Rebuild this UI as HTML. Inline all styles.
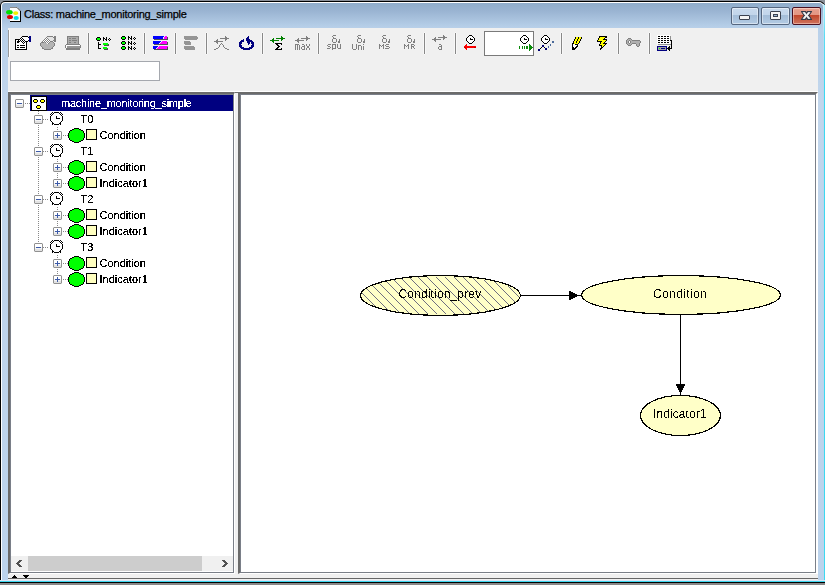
<!DOCTYPE html>
<html><head><meta charset="utf-8">
<style>
*{margin:0;padding:0;box-sizing:border-box}
html,body{width:825px;height:585px;overflow:hidden;background:#8b919a}
body{position:relative;font-family:"Liberation Sans",sans-serif}
.a{position:absolute}
.tr{position:absolute;font-size:11px;color:#000;line-height:16px;white-space:nowrap;letter-spacing:0px}
.ct{position:absolute;font-size:12px;color:#000;line-height:14px;white-space:nowrap;letter-spacing:0.3px}
</style></head>
<body>
<div class="a" style="left:0;top:1px;width:825px;height:581px;background:#000;border-radius:5px 6px 0 0"></div>
<div class="a" style="left:1px;top:2px;width:823px;height:579px;background:#fff;border-radius:4px 5px 0 0"></div>
<div class="a" style="left:2px;top:3px;width:821px;height:577px;border-radius:3px 4px 0 0;background:linear-gradient(#90adcb 0px,#9ab4d2 8px,#b3cce6 22px,#b9d1ea 26px,#c2d6ec 100px,#bcd3ec 560px)"></div>
<div class="a" style="left:824px;top:5px;width:1px;height:577px;background:linear-gradient(#a8eefc 0,#5cdcf4 30px,#3cd8f0 80px)"></div><div class="a" style="left:823px;top:4px;width:1px;height:577px;background:linear-gradient(#c8f2fc 0,#b8dcf0 30px,#bcd4ec 80px)"></div>
<div class="a" style="left:0;top:580px;width:825px;height:1px;background:#dde4f4"></div>
<div class="a" style="left:0;top:581px;width:825px;height:1px;background:#3cd8f0"></div>
<div class="a" style="left:0;top:582px;width:825px;height:1px;background:#000"></div>
<div class="a" style="left:0;top:583px;width:825px;height:2px;background:#888"></div>
<svg class="a" style="left:0;top:0" width="30" height="30">
<path d="M10 7 H17 L21 11 V22 H10 Z" fill="#fafafa"/>
<path d="M10 7.5 H17" stroke="#8a8a8a" stroke-width="1"/>
<path d="M17 7.5 L20.5 11" stroke="#404040" stroke-width="1"/>
<path d="M20.5 11 V22 M10 21.5 H21" stroke="#000" stroke-width="1" shape-rendering="crispEdges"/>
<ellipse cx="9.4" cy="12.3" rx="3.3" ry="2.2" fill="#00dd00"/>
<ellipse cx="15.7" cy="13.1" rx="2.6" ry="1.9" fill="#f0f000"/>
<ellipse cx="10" cy="17" rx="3" ry="2.1" fill="#e00000"/>
<ellipse cx="16.2" cy="18" rx="2.6" ry="2" fill="#00e0e0"/>
</svg>
<div class="a" style="left:24px;top:7px;font-size:11px;color:#000;white-space:nowrap;line-height:14px;letter-spacing:-0.25px;-webkit-text-stroke:0.25px #000">Class: machine_monitoring_simple</div>

<div class="a" style="left:731px;top:7px;width:28px;height:18px;border:1px solid #55667f;border-radius:2px;background:linear-gradient(#c9daee 0,#c2d5ea 7px,#a3bcd7 7px,#b3cbe4 16px);box-shadow:inset 0 0 0 1px rgba(255,255,255,0.45)"></div>
<div class="a" style="left:739px;top:15px;width:11px;height:5px;border:1px solid #3c4250;border-radius:1px;background:#f4f4f4"></div>
<div class="a" style="left:761px;top:7px;width:29px;height:18px;border:1px solid #55667f;border-radius:2px;background:linear-gradient(#c9daee 0,#c2d5ea 7px,#a3bcd7 7px,#b3cbe4 16px);box-shadow:inset 0 0 0 1px rgba(255,255,255,0.45)"></div>
<div class="a" style="left:770px;top:11px;width:11px;height:9px;border:1px solid #3c4250;border-radius:1px;background:#f4f4f4"></div>
<div class="a" style="left:773px;top:14px;width:5px;height:3px;border:1px solid #3c4250;background:#9ab4d2"></div>
<div class="a" style="left:792px;top:7px;width:29px;height:18px;border:1px solid #4a1020;border-radius:2px;background:linear-gradient(#f0b8a8 0,#e49c8a 2px,#e39683 7px,#c0442a 7px,#c4553a 10px,#d0735d 16px);box-shadow:inset 0 0 0 1px rgba(255,220,210,0.5)"></div>
<svg class="a" style="left:0;top:0" width="825" height="30"><polygon points="801.5,11.5 805.5,11.5 806.5,13.2 807.5,11.5 811.5,11.5 808.8,15.5 811.5,19.5 807.5,19.5 806.5,17.8 805.5,19.5 801.5,19.5 804.2,15.5" fill="#343a48" stroke="#343a48" stroke-width="1.2" stroke-linejoin="round"/><polygon points="803,12.5 805,12.5 806.5,15 808,12.5 810,12.5 807.6,15.5 810,18.5 808,18.5 806.5,16 805,18.5 803,18.5 805.4,15.5" fill="#f6f6f6" stroke="#f6f6f6" stroke-width="0.7" stroke-linejoin="round"/></svg>

<div class="a" style="left:8px;top:28px;width:810px;height:552px;background:#f0f0f0"></div>
<div class="a" style="left:8px;top:30px;width:2px;height:27px;border-left:1px solid #9a9a9a;border-right:1px solid #fff"></div>
<div class="a" style="left:10px;top:61px;width:150px;height:20px;border:1px solid #a5a8ae;background:#fff"></div>
<div class="a" style="left:484px;top:31px;width:50px;height:25px;border:1px solid #7a7a7a;background:#fff"></div>
<div class="a" style="left:8px;top:91px;width:810px;height:1px;background:#fff"></div>
<div class="a" style="left:8px;top:92px;width:227px;height:482px;background:#fff;border-top:2px solid #6b6b6b;border-left:2px solid #6b6b6b;border-bottom:1px solid #fff;border-right:1px solid #fff"></div>
<div class="a" style="left:10px;top:94px;width:224px;height:479px;border-top:1px solid #7a7f88;border-left:1px solid #7a7f88;border-bottom:1px solid #7a7f88;border-right:1px solid #7a7f88"></div>
<div class="a" style="left:238px;top:92px;width:580px;height:482px;background:#fff;border-top:2px solid #6b6b6b;border-left:2px solid #6b6b6b;border-bottom:1px solid #fff;border-right:2px solid #fff"></div>
<div class="a" style="left:240px;top:94px;width:576px;height:479px;border-top:1px solid #7a7f88;border-left:1px solid #7a7f88;border-bottom:1px solid #7a7f88;border-right:1px solid #7a7f88"></div>
<div class="a" style="left:8px;top:578px;width:810px;height:1px;background:#666"></div>
<svg class="a" style="left:0;top:0" width="825" height="585" shape-rendering="crispEdges"><rect x="22" y="36" width="6" height="1" fill="#000"/><rect x="29" y="36" width="2" height="1" fill="#000080"/><rect x="21" y="37" width="1" height="1" fill="#000"/><rect x="22" y="37" width="6" height="1" fill="#fff"/><rect x="28" y="37" width="1" height="1" fill="#000"/><rect x="29" y="37" width="2" height="1" fill="#000080"/><rect x="20" y="38" width="1" height="1" fill="#000"/><rect x="21" y="38" width="1" height="1" fill="#fff"/><rect x="22" y="38" width="1" height="1" fill="#000"/><rect x="23" y="38" width="6" height="1" fill="#fff"/><rect x="29" y="38" width="2" height="1" fill="#000080"/><rect x="15" y="39" width="5" height="1" fill="#000"/><rect x="20" y="39" width="1" height="1" fill="#fff"/><rect x="21" y="39" width="1" height="1" fill="#000"/><rect x="22" y="39" width="1" height="1" fill="#fff"/><rect x="23" y="39" width="1" height="1" fill="#000"/><rect x="24" y="39" width="5" height="1" fill="#fff"/><rect x="29" y="39" width="2" height="1" fill="#000080"/><rect x="15" y="40" width="1" height="1" fill="#000"/><rect x="16" y="40" width="2" height="1" fill="#fff"/><rect x="18" y="40" width="1" height="1" fill="#000"/><rect x="19" y="40" width="1" height="1" fill="#fff"/><rect x="20" y="40" width="1" height="1" fill="#000"/><rect x="21" y="40" width="1" height="1" fill="#fff"/><rect x="22" y="40" width="1" height="1" fill="#000"/><rect x="23" y="40" width="1" height="1" fill="#fff"/><rect x="24" y="40" width="1" height="1" fill="#000"/><rect x="25" y="40" width="3" height="1" fill="#fff"/><rect x="28" y="40" width="1" height="1" fill="#000"/><rect x="29" y="40" width="2" height="1" fill="#000080"/><rect x="15" y="41" width="1" height="1" fill="#000"/><rect x="16" y="41" width="1" height="1" fill="#fff"/><rect x="17" y="41" width="3" height="1" fill="#000"/><rect x="20" y="41" width="1" height="1" fill="#fff"/><rect x="21" y="41" width="1" height="1" fill="#000"/><rect x="22" y="41" width="1" height="1" fill="#fff"/><rect x="23" y="41" width="1" height="1" fill="#000"/><rect x="24" y="41" width="1" height="1" fill="#fff"/><rect x="25" y="41" width="3" height="1" fill="#000"/><rect x="29" y="41" width="2" height="1" fill="#000080"/><rect x="15" y="42" width="1" height="1" fill="#000"/><rect x="16" y="42" width="1" height="1" fill="#fff"/><rect x="17" y="42" width="2" height="1" fill="#000"/><rect x="19" y="42" width="3" height="1" fill="#fff"/><rect x="22" y="42" width="1" height="1" fill="#000"/><rect x="23" y="42" width="1" height="1" fill="#fff"/><rect x="24" y="42" width="1" height="1" fill="#000"/><rect x="25" y="42" width="1" height="1" fill="#fff"/><rect x="26" y="42" width="1" height="1" fill="#000"/><rect x="15" y="43" width="1" height="1" fill="#000"/><rect x="16" y="43" width="7" height="1" fill="#fff"/><rect x="23" y="43" width="1" height="1" fill="#000"/><rect x="24" y="43" width="2" height="1" fill="#fff"/><rect x="26" y="43" width="1" height="1" fill="#000"/><rect x="15" y="44" width="1" height="1" fill="#000"/><rect x="16" y="44" width="10" height="1" fill="#fff"/><rect x="26" y="44" width="1" height="1" fill="#000"/><rect x="15" y="45" width="1" height="1" fill="#000"/><rect x="16" y="45" width="1" height="1" fill="#fff"/><rect x="17" y="45" width="2" height="1" fill="#000"/><rect x="19" y="45" width="1" height="1" fill="#fff"/><rect x="20" y="45" width="5" height="1" fill="#000"/><rect x="25" y="45" width="1" height="1" fill="#fff"/><rect x="26" y="45" width="1" height="1" fill="#000"/><rect x="15" y="46" width="1" height="1" fill="#000"/><rect x="16" y="46" width="10" height="1" fill="#fff"/><rect x="26" y="46" width="1" height="1" fill="#000"/><rect x="15" y="47" width="1" height="1" fill="#000"/><rect x="16" y="47" width="1" height="1" fill="#fff"/><rect x="17" y="47" width="2" height="1" fill="#000"/><rect x="19" y="47" width="1" height="1" fill="#fff"/><rect x="20" y="47" width="5" height="1" fill="#000"/><rect x="25" y="47" width="1" height="1" fill="#fff"/><rect x="26" y="47" width="1" height="1" fill="#000"/><rect x="15" y="48" width="1" height="1" fill="#000"/><rect x="16" y="48" width="10" height="1" fill="#fff"/><rect x="26" y="48" width="1" height="1" fill="#000"/><rect x="15" y="49" width="12" height="1" fill="#000"/><rect x="47" y="36" width="6" height="1" fill="#808080"/><rect x="54" y="36" width="2" height="1" fill="#808080"/><rect x="46" y="37" width="1" height="1" fill="#808080"/><rect x="47" y="37" width="6" height="1" fill="#e4e4e4"/><rect x="53" y="37" width="3" height="1" fill="#808080"/><rect x="45" y="38" width="1" height="1" fill="#808080"/><rect x="46" y="38" width="1" height="1" fill="#fff"/><rect x="47" y="38" width="1" height="1" fill="#808080"/><rect x="48" y="38" width="6" height="1" fill="#e4e4e4"/><rect x="54" y="38" width="2" height="1" fill="#808080"/><rect x="44" y="39" width="1" height="1" fill="#808080"/><rect x="45" y="39" width="1" height="1" fill="#fff"/><rect x="46" y="39" width="1" height="1" fill="#808080"/><rect x="47" y="39" width="1" height="1" fill="#fff"/><rect x="48" y="39" width="1" height="1" fill="#808080"/><rect x="49" y="39" width="5" height="1" fill="#e4e4e4"/><rect x="54" y="39" width="2" height="1" fill="#808080"/><rect x="43" y="40" width="1" height="1" fill="#808080"/><rect x="44" y="40" width="1" height="1" fill="#fff"/><rect x="45" y="40" width="1" height="1" fill="#808080"/><rect x="46" y="40" width="1" height="1" fill="#fff"/><rect x="47" y="40" width="1" height="1" fill="#808080"/><rect x="48" y="40" width="1" height="1" fill="#fff"/><rect x="49" y="40" width="1" height="1" fill="#808080"/><rect x="50" y="40" width="3" height="1" fill="#e4e4e4"/><rect x="53" y="40" width="3" height="1" fill="#808080"/><rect x="42" y="41" width="1" height="1" fill="#808080"/><rect x="43" y="41" width="1" height="1" fill="#fff"/><rect x="44" y="41" width="1" height="1" fill="#808080"/><rect x="45" y="41" width="1" height="1" fill="#fff"/><rect x="46" y="41" width="1" height="1" fill="#808080"/><rect x="47" y="41" width="1" height="1" fill="#fff"/><rect x="48" y="41" width="1" height="1" fill="#808080"/><rect x="49" y="41" width="1" height="1" fill="#fff"/><rect x="50" y="41" width="3" height="1" fill="#808080"/><rect x="54" y="41" width="2" height="1" fill="#808080"/><rect x="41" y="42" width="3" height="1" fill="#808080"/><rect x="44" y="42" width="1" height="1" fill="#b4b4b4"/><rect x="45" y="42" width="1" height="1" fill="#808080"/><rect x="46" y="42" width="1" height="1" fill="#fff"/><rect x="47" y="42" width="1" height="1" fill="#808080"/><rect x="48" y="42" width="1" height="1" fill="#fff"/><rect x="49" y="42" width="1" height="1" fill="#808080"/><rect x="50" y="42" width="3" height="1" fill="#b4b4b4"/><rect x="53" y="42" width="1" height="1" fill="#808080"/><rect x="40" y="43" width="1" height="1" fill="#808080"/><rect x="41" y="43" width="6" height="1" fill="#b4b4b4"/><rect x="47" y="43" width="1" height="1" fill="#fff"/><rect x="48" y="43" width="1" height="1" fill="#808080"/><rect x="49" y="43" width="5" height="1" fill="#b4b4b4"/><rect x="54" y="43" width="1" height="1" fill="#808080"/><rect x="40" y="44" width="1" height="1" fill="#808080"/><rect x="41" y="44" width="13" height="1" fill="#b4b4b4"/><rect x="54" y="44" width="1" height="1" fill="#808080"/><rect x="40" y="45" width="1" height="1" fill="#808080"/><rect x="41" y="45" width="13" height="1" fill="#b4b4b4"/><rect x="54" y="45" width="1" height="1" fill="#808080"/><rect x="41" y="46" width="1" height="1" fill="#808080"/><rect x="42" y="46" width="11" height="1" fill="#b4b4b4"/><rect x="53" y="46" width="1" height="1" fill="#808080"/><rect x="42" y="47" width="1" height="1" fill="#808080"/><rect x="43" y="47" width="9" height="1" fill="#b4b4b4"/><rect x="52" y="47" width="1" height="1" fill="#808080"/><rect x="42" y="48" width="2" height="1" fill="#808080"/><rect x="44" y="48" width="7" height="1" fill="#b4b4b4"/><rect x="51" y="48" width="2" height="1" fill="#808080"/><rect x="44" y="49" width="7" height="1" fill="#808080"/><rect x="67" y="36" width="12" height="1" fill="#808080"/><rect x="67" y="37" width="1" height="1" fill="#808080"/><rect x="68" y="37" width="10" height="1" fill="#ababab"/><rect x="78" y="37" width="1" height="1" fill="#808080"/><rect x="67" y="38" width="1" height="1" fill="#808080"/><rect x="68" y="38" width="1" height="1" fill="#ababab"/><rect x="69" y="38" width="2" height="1" fill="#808080"/><rect x="71" y="38" width="1" height="1" fill="#ababab"/><rect x="72" y="38" width="4" height="1" fill="#808080"/><rect x="76" y="38" width="2" height="1" fill="#ababab"/><rect x="78" y="38" width="1" height="1" fill="#808080"/><rect x="67" y="39" width="1" height="1" fill="#808080"/><rect x="68" y="39" width="10" height="1" fill="#ababab"/><rect x="78" y="39" width="1" height="1" fill="#808080"/><rect x="67" y="40" width="1" height="1" fill="#808080"/><rect x="68" y="40" width="1" height="1" fill="#ababab"/><rect x="69" y="40" width="2" height="1" fill="#808080"/><rect x="71" y="40" width="1" height="1" fill="#ababab"/><rect x="72" y="40" width="5" height="1" fill="#808080"/><rect x="77" y="40" width="1" height="1" fill="#ababab"/><rect x="78" y="40" width="1" height="1" fill="#808080"/><rect x="67" y="41" width="1" height="1" fill="#808080"/><rect x="68" y="41" width="10" height="1" fill="#ababab"/><rect x="78" y="41" width="1" height="1" fill="#808080"/><rect x="67" y="42" width="1" height="1" fill="#808080"/><rect x="68" y="42" width="1" height="1" fill="#ababab"/><rect x="69" y="42" width="2" height="1" fill="#808080"/><rect x="71" y="42" width="3" height="1" fill="#ababab"/><rect x="74" y="42" width="2" height="1" fill="#808080"/><rect x="76" y="42" width="2" height="1" fill="#ababab"/><rect x="78" y="42" width="1" height="1" fill="#808080"/><rect x="67" y="43" width="1" height="1" fill="#808080"/><rect x="68" y="43" width="10" height="1" fill="#ababab"/><rect x="78" y="43" width="1" height="1" fill="#808080"/><rect x="66" y="44" width="14" height="1" fill="#808080"/><rect x="65" y="45" width="1" height="1" fill="#808080"/><rect x="66" y="45" width="14" height="1" fill="#fff"/><rect x="80" y="45" width="1" height="1" fill="#808080"/><rect x="65" y="46" width="1" height="1" fill="#808080"/><rect x="66" y="46" width="1" height="1" fill="#fff"/><rect x="67" y="46" width="13" height="1" fill="#959595"/><rect x="80" y="46" width="1" height="1" fill="#808080"/><rect x="65" y="47" width="1" height="1" fill="#808080"/><rect x="66" y="47" width="1" height="1" fill="#fff"/><rect x="67" y="47" width="13" height="1" fill="#959595"/><rect x="80" y="47" width="1" height="1" fill="#808080"/><rect x="66" y="48" width="14" height="1" fill="#808080"/><rect x="66" y="49" width="14" height="1" fill="#808080"/><rect x="97" y="37" width="3" height="1" fill="#000"/><rect x="103" y="37" width="1" height="1" fill="#000"/><rect x="106" y="37" width="1" height="1" fill="#000"/><rect x="96" y="38" width="1" height="1" fill="#000"/><rect x="97" y="38" width="3" height="1" fill="#00ff00"/><rect x="100" y="38" width="1" height="1" fill="#000"/><rect x="103" y="38" width="2" height="1" fill="#000"/><rect x="106" y="38" width="1" height="1" fill="#000"/><rect x="109" y="38" width="1" height="1" fill="#000"/><rect x="96" y="39" width="1" height="1" fill="#000"/><rect x="97" y="39" width="3" height="1" fill="#00ff00"/><rect x="100" y="39" width="1" height="1" fill="#000"/><rect x="103" y="39" width="1" height="1" fill="#000"/><rect x="105" y="39" width="2" height="1" fill="#000"/><rect x="108" y="39" width="1" height="1" fill="#000"/><rect x="110" y="39" width="1" height="1" fill="#000"/><rect x="97" y="40" width="3" height="1" fill="#000"/><rect x="103" y="40" width="1" height="1" fill="#000"/><rect x="106" y="40" width="1" height="1" fill="#000"/><rect x="109" y="40" width="1" height="1" fill="#000"/><rect x="98" y="42" width="1" height="1" fill="#000"/><rect x="98" y="43" width="1" height="1" fill="#000"/><rect x="103" y="43" width="5" height="1" fill="#00ff00"/><rect x="98" y="44" width="3" height="1" fill="#000"/><rect x="103" y="44" width="5" height="1" fill="#00ff00"/><rect x="108" y="44" width="1" height="1" fill="#505050"/><rect x="98" y="45" width="1" height="1" fill="#000"/><rect x="104" y="45" width="5" height="1" fill="#505050"/><rect x="98" y="46" width="1" height="1" fill="#000"/><rect x="98" y="47" width="1" height="1" fill="#000"/><rect x="103" y="47" width="4" height="1" fill="#00ff00"/><rect x="98" y="48" width="3" height="1" fill="#000"/><rect x="103" y="48" width="4" height="1" fill="#00ff00"/><rect x="107" y="48" width="1" height="1" fill="#505050"/><rect x="104" y="49" width="4" height="1" fill="#505050"/><rect x="122" y="36" width="3" height="1" fill="#000"/><rect x="128" y="36" width="1" height="1" fill="#000"/><rect x="131" y="36" width="1" height="1" fill="#000"/><rect x="121" y="37" width="1" height="1" fill="#000"/><rect x="122" y="37" width="3" height="1" fill="#00ff00"/><rect x="125" y="37" width="1" height="1" fill="#000"/><rect x="128" y="37" width="2" height="1" fill="#000"/><rect x="131" y="37" width="1" height="1" fill="#000"/><rect x="134" y="37" width="1" height="1" fill="#000"/><rect x="121" y="38" width="1" height="1" fill="#000"/><rect x="122" y="38" width="3" height="1" fill="#00ff00"/><rect x="125" y="38" width="1" height="1" fill="#000"/><rect x="128" y="38" width="1" height="1" fill="#000"/><rect x="130" y="38" width="2" height="1" fill="#000"/><rect x="133" y="38" width="1" height="1" fill="#000"/><rect x="135" y="38" width="1" height="1" fill="#000"/><rect x="122" y="39" width="3" height="1" fill="#000"/><rect x="128" y="39" width="1" height="1" fill="#000"/><rect x="131" y="39" width="1" height="1" fill="#000"/><rect x="134" y="39" width="1" height="1" fill="#000"/><rect x="122" y="41" width="3" height="1" fill="#000"/><rect x="128" y="41" width="1" height="1" fill="#000"/><rect x="131" y="41" width="1" height="1" fill="#000"/><rect x="121" y="42" width="1" height="1" fill="#000"/><rect x="122" y="42" width="3" height="1" fill="#00ff00"/><rect x="125" y="42" width="1" height="1" fill="#000"/><rect x="128" y="42" width="2" height="1" fill="#000"/><rect x="131" y="42" width="1" height="1" fill="#000"/><rect x="134" y="42" width="1" height="1" fill="#000"/><rect x="121" y="43" width="1" height="1" fill="#000"/><rect x="122" y="43" width="3" height="1" fill="#00ff00"/><rect x="125" y="43" width="1" height="1" fill="#000"/><rect x="128" y="43" width="1" height="1" fill="#000"/><rect x="130" y="43" width="2" height="1" fill="#000"/><rect x="133" y="43" width="1" height="1" fill="#000"/><rect x="135" y="43" width="1" height="1" fill="#000"/><rect x="122" y="44" width="3" height="1" fill="#000"/><rect x="128" y="44" width="1" height="1" fill="#000"/><rect x="131" y="44" width="1" height="1" fill="#000"/><rect x="134" y="44" width="1" height="1" fill="#000"/><rect x="122" y="46" width="3" height="1" fill="#000"/><rect x="128" y="46" width="1" height="1" fill="#000"/><rect x="131" y="46" width="1" height="1" fill="#000"/><rect x="121" y="47" width="1" height="1" fill="#000"/><rect x="122" y="47" width="3" height="1" fill="#00ff00"/><rect x="125" y="47" width="1" height="1" fill="#000"/><rect x="128" y="47" width="2" height="1" fill="#000"/><rect x="131" y="47" width="1" height="1" fill="#000"/><rect x="134" y="47" width="1" height="1" fill="#000"/><rect x="121" y="48" width="1" height="1" fill="#000"/><rect x="122" y="48" width="3" height="1" fill="#00ff00"/><rect x="125" y="48" width="1" height="1" fill="#000"/><rect x="128" y="48" width="1" height="1" fill="#000"/><rect x="130" y="48" width="2" height="1" fill="#000"/><rect x="133" y="48" width="1" height="1" fill="#000"/><rect x="135" y="48" width="1" height="1" fill="#000"/><rect x="122" y="49" width="3" height="1" fill="#000"/><rect x="128" y="49" width="1" height="1" fill="#000"/><rect x="131" y="49" width="1" height="1" fill="#000"/><rect x="134" y="49" width="1" height="1" fill="#000"/><rect x="153" y="36" width="11" height="1" fill="#0000ff"/><rect x="165" y="36" width="2" height="1" fill="#ff00ff"/><rect x="153" y="37" width="10" height="1" fill="#0000ff"/><rect x="164" y="37" width="3" height="1" fill="#ff00ff"/><rect x="167" y="37" width="1" height="1" fill="#505050"/><rect x="153" y="38" width="10" height="1" fill="#0000ff"/><rect x="164" y="38" width="3" height="1" fill="#ff00ff"/><rect x="167" y="38" width="1" height="1" fill="#505050"/><rect x="154" y="39" width="14" height="1" fill="#505050"/><rect x="153" y="41" width="8" height="1" fill="#0000ff"/><rect x="162" y="41" width="5" height="1" fill="#ff00ff"/><rect x="153" y="42" width="7" height="1" fill="#0000ff"/><rect x="161" y="42" width="6" height="1" fill="#ff00ff"/><rect x="167" y="42" width="1" height="1" fill="#505050"/><rect x="153" y="43" width="6" height="1" fill="#0000ff"/><rect x="160" y="43" width="7" height="1" fill="#ff00ff"/><rect x="167" y="43" width="1" height="1" fill="#505050"/><rect x="154" y="44" width="14" height="1" fill="#505050"/><rect x="153" y="46" width="5" height="1" fill="#0000ff"/><rect x="159" y="46" width="9" height="1" fill="#ff00ff"/><rect x="153" y="47" width="4" height="1" fill="#0000ff"/><rect x="158" y="47" width="9" height="1" fill="#ff00ff"/><rect x="167" y="47" width="1" height="1" fill="#505050"/><rect x="153" y="48" width="3" height="1" fill="#0000ff"/><rect x="157" y="48" width="10" height="1" fill="#ff00ff"/><rect x="167" y="48" width="1" height="1" fill="#505050"/><rect x="154" y="49" width="14" height="1" fill="#505050"/><rect x="184" y="36" width="13" height="1" fill="#959595"/><rect x="184" y="37" width="14" height="1" fill="#959595"/><rect x="184" y="38" width="14" height="1" fill="#959595"/><rect x="185" y="39" width="12" height="1" fill="#959595"/><rect x="184" y="41" width="6" height="1" fill="#959595"/><rect x="184" y="42" width="7" height="1" fill="#959595"/><rect x="184" y="43" width="7" height="1" fill="#959595"/><rect x="185" y="44" width="6" height="1" fill="#959595"/><rect x="184" y="46" width="10" height="1" fill="#959595"/><rect x="184" y="47" width="11" height="1" fill="#959595"/><rect x="184" y="48" width="11" height="1" fill="#959595"/><rect x="185" y="49" width="10" height="1" fill="#959595"/><rect x="225" y="36" width="1" height="1" fill="#808080"/><rect x="225" y="37" width="2" height="1" fill="#808080"/><rect x="220" y="38" width="9" height="1" fill="#808080"/><rect x="217" y="39" width="1" height="1" fill="#808080"/><rect x="225" y="39" width="2" height="1" fill="#808080"/><rect x="216" y="40" width="2" height="1" fill="#808080"/><rect x="225" y="40" width="1" height="1" fill="#808080"/><rect x="214" y="41" width="9" height="1" fill="#808080"/><rect x="216" y="42" width="2" height="1" fill="#808080"/><rect x="217" y="43" width="1" height="1" fill="#808080"/><rect x="221" y="43" width="1" height="1" fill="#808080"/><rect x="220" y="44" width="1" height="1" fill="#808080"/><rect x="222" y="44" width="1" height="1" fill="#808080"/><rect x="219" y="45" width="1" height="1" fill="#808080"/><rect x="223" y="45" width="1" height="1" fill="#808080"/><rect x="219" y="46" width="1" height="1" fill="#808080"/><rect x="223" y="46" width="1" height="1" fill="#808080"/><rect x="218" y="47" width="1" height="1" fill="#808080"/><rect x="224" y="47" width="1" height="1" fill="#808080"/><rect x="216" y="48" width="2" height="1" fill="#808080"/><rect x="225" y="48" width="2" height="1" fill="#808080"/><rect x="214" y="49" width="2" height="1" fill="#808080"/><rect x="227" y="49" width="2" height="1" fill="#808080"/><rect x="248" y="36" width="1" height="1" fill="#000080"/><rect x="247" y="37" width="2" height="1" fill="#000080"/><rect x="246" y="38" width="3" height="1" fill="#000080"/><rect x="243" y="39" width="1" height="1" fill="#000080"/><rect x="246" y="39" width="4" height="1" fill="#000080"/><rect x="241" y="40" width="3" height="1" fill="#000080"/><rect x="246" y="40" width="6" height="1" fill="#000080"/><rect x="240" y="41" width="4" height="1" fill="#000080"/><rect x="247" y="41" width="6" height="1" fill="#000080"/><rect x="239" y="42" width="3" height="1" fill="#000080"/><rect x="247" y="42" width="3" height="1" fill="#000080"/><rect x="251" y="42" width="3" height="1" fill="#000080"/><rect x="239" y="43" width="3" height="1" fill="#000080"/><rect x="248" y="43" width="2" height="1" fill="#000080"/><rect x="251" y="43" width="3" height="1" fill="#000080"/><rect x="239" y="44" width="2" height="1" fill="#000080"/><rect x="248" y="44" width="1" height="1" fill="#000080"/><rect x="252" y="44" width="2" height="1" fill="#000080"/><rect x="239" y="45" width="3" height="1" fill="#000080"/><rect x="251" y="45" width="3" height="1" fill="#000080"/><rect x="239" y="46" width="3" height="1" fill="#000080"/><rect x="251" y="46" width="3" height="1" fill="#000080"/><rect x="240" y="47" width="4" height="1" fill="#000080"/><rect x="249" y="47" width="4" height="1" fill="#000080"/><rect x="241" y="48" width="11" height="1" fill="#000080"/><rect x="243" y="49" width="7" height="1" fill="#000080"/><rect x="281" y="36" width="1" height="1" fill="#008000"/><rect x="281" y="37" width="2" height="1" fill="#008000"/><rect x="273" y="38" width="1" height="1" fill="#008000"/><rect x="276" y="38" width="9" height="1" fill="#008000"/><rect x="272" y="39" width="2" height="1" fill="#008000"/><rect x="281" y="39" width="2" height="1" fill="#008000"/><rect x="270" y="40" width="9" height="1" fill="#008000"/><rect x="281" y="40" width="1" height="1" fill="#008000"/><rect x="272" y="41" width="2" height="1" fill="#008000"/><rect x="273" y="42" width="1" height="1" fill="#008000"/><rect x="275" y="43" width="7" height="1" fill="#000"/><rect x="276" y="44" width="2" height="1" fill="#000"/><rect x="281" y="44" width="1" height="1" fill="#000"/><rect x="277" y="45" width="2" height="1" fill="#000"/><rect x="278" y="46" width="2" height="1" fill="#000"/><rect x="277" y="47" width="2" height="1" fill="#000"/><rect x="276" y="48" width="2" height="1" fill="#000"/><rect x="281" y="48" width="1" height="1" fill="#000"/><rect x="275" y="49" width="7" height="1" fill="#000"/><rect x="306" y="36" width="1" height="1" fill="#808080"/><rect x="306" y="37" width="2" height="1" fill="#808080"/><rect x="298" y="38" width="1" height="1" fill="#808080"/><rect x="301" y="38" width="9" height="1" fill="#808080"/><rect x="297" y="39" width="2" height="1" fill="#808080"/><rect x="306" y="39" width="2" height="1" fill="#808080"/><rect x="295" y="40" width="9" height="1" fill="#808080"/><rect x="306" y="40" width="1" height="1" fill="#808080"/><rect x="297" y="41" width="2" height="1" fill="#808080"/><rect x="298" y="42" width="1" height="1" fill="#808080"/><rect x="295" y="44" width="4" height="1" fill="#808080"/><rect x="302" y="44" width="2" height="1" fill="#808080"/><rect x="306" y="44" width="1" height="1" fill="#808080"/><rect x="309" y="44" width="1" height="1" fill="#808080"/><rect x="295" y="45" width="1" height="1" fill="#808080"/><rect x="297" y="45" width="1" height="1" fill="#808080"/><rect x="299" y="45" width="1" height="1" fill="#808080"/><rect x="304" y="45" width="1" height="1" fill="#808080"/><rect x="306" y="45" width="1" height="1" fill="#808080"/><rect x="309" y="45" width="1" height="1" fill="#808080"/><rect x="295" y="46" width="1" height="1" fill="#808080"/><rect x="297" y="46" width="1" height="1" fill="#808080"/><rect x="299" y="46" width="1" height="1" fill="#808080"/><rect x="302" y="46" width="3" height="1" fill="#808080"/><rect x="307" y="46" width="2" height="1" fill="#808080"/><rect x="295" y="47" width="1" height="1" fill="#808080"/><rect x="297" y="47" width="1" height="1" fill="#808080"/><rect x="299" y="47" width="1" height="1" fill="#808080"/><rect x="301" y="47" width="1" height="1" fill="#808080"/><rect x="304" y="47" width="1" height="1" fill="#808080"/><rect x="307" y="47" width="2" height="1" fill="#808080"/><rect x="295" y="48" width="1" height="1" fill="#808080"/><rect x="297" y="48" width="1" height="1" fill="#808080"/><rect x="299" y="48" width="1" height="1" fill="#808080"/><rect x="301" y="48" width="1" height="1" fill="#808080"/><rect x="304" y="48" width="1" height="1" fill="#808080"/><rect x="306" y="48" width="1" height="1" fill="#808080"/><rect x="309" y="48" width="1" height="1" fill="#808080"/><rect x="295" y="49" width="1" height="1" fill="#808080"/><rect x="297" y="49" width="1" height="1" fill="#808080"/><rect x="299" y="49" width="1" height="1" fill="#808080"/><rect x="302" y="49" width="3" height="1" fill="#808080"/><rect x="306" y="49" width="1" height="1" fill="#808080"/><rect x="309" y="49" width="1" height="1" fill="#808080"/><rect x="333" y="35" width="3" height="1" fill="#808080"/><rect x="332" y="36" width="1" height="1" fill="#808080"/><rect x="333" y="37" width="1" height="1" fill="#808080"/><rect x="333" y="38" width="3" height="1" fill="#808080"/><rect x="332" y="39" width="1" height="1" fill="#808080"/><rect x="336" y="39" width="1" height="1" fill="#808080"/><rect x="339" y="39" width="1" height="1" fill="#808080"/><rect x="332" y="40" width="1" height="1" fill="#808080"/><rect x="336" y="40" width="1" height="1" fill="#808080"/><rect x="339" y="40" width="1" height="1" fill="#808080"/><rect x="332" y="41" width="1" height="1" fill="#808080"/><rect x="336" y="41" width="1" height="1" fill="#808080"/><rect x="338" y="41" width="2" height="1" fill="#808080"/><rect x="333" y="42" width="3" height="1" fill="#808080"/><rect x="338" y="42" width="2" height="1" fill="#808080"/><rect x="328" y="44" width="3" height="1" fill="#808080"/><rect x="332" y="44" width="4" height="1" fill="#808080"/><rect x="337" y="44" width="1" height="1" fill="#808080"/><rect x="340" y="44" width="1" height="1" fill="#808080"/><rect x="327" y="45" width="1" height="1" fill="#808080"/><rect x="332" y="45" width="1" height="1" fill="#808080"/><rect x="335" y="45" width="1" height="1" fill="#808080"/><rect x="337" y="45" width="1" height="1" fill="#808080"/><rect x="340" y="45" width="1" height="1" fill="#808080"/><rect x="328" y="46" width="2" height="1" fill="#808080"/><rect x="332" y="46" width="1" height="1" fill="#808080"/><rect x="335" y="46" width="1" height="1" fill="#808080"/><rect x="337" y="46" width="1" height="1" fill="#808080"/><rect x="340" y="46" width="1" height="1" fill="#808080"/><rect x="330" y="47" width="1" height="1" fill="#808080"/><rect x="332" y="47" width="1" height="1" fill="#808080"/><rect x="335" y="47" width="1" height="1" fill="#808080"/><rect x="337" y="47" width="1" height="1" fill="#808080"/><rect x="340" y="47" width="1" height="1" fill="#808080"/><rect x="327" y="48" width="3" height="1" fill="#808080"/><rect x="332" y="48" width="4" height="1" fill="#808080"/><rect x="338" y="48" width="3" height="1" fill="#808080"/><rect x="332" y="49" width="1" height="1" fill="#808080"/><rect x="358" y="35" width="3" height="1" fill="#808080"/><rect x="357" y="36" width="1" height="1" fill="#808080"/><rect x="358" y="37" width="1" height="1" fill="#808080"/><rect x="358" y="38" width="3" height="1" fill="#808080"/><rect x="357" y="39" width="1" height="1" fill="#808080"/><rect x="361" y="39" width="1" height="1" fill="#808080"/><rect x="364" y="39" width="1" height="1" fill="#808080"/><rect x="357" y="40" width="1" height="1" fill="#808080"/><rect x="361" y="40" width="1" height="1" fill="#808080"/><rect x="364" y="40" width="1" height="1" fill="#808080"/><rect x="357" y="41" width="1" height="1" fill="#808080"/><rect x="361" y="41" width="1" height="1" fill="#808080"/><rect x="363" y="41" width="2" height="1" fill="#808080"/><rect x="358" y="42" width="3" height="1" fill="#808080"/><rect x="363" y="42" width="2" height="1" fill="#808080"/><rect x="352" y="44" width="1" height="1" fill="#808080"/><rect x="356" y="44" width="1" height="1" fill="#808080"/><rect x="363" y="44" width="1" height="1" fill="#808080"/><rect x="352" y="45" width="1" height="1" fill="#808080"/><rect x="356" y="45" width="1" height="1" fill="#808080"/><rect x="358" y="45" width="3" height="1" fill="#808080"/><rect x="352" y="46" width="1" height="1" fill="#808080"/><rect x="356" y="46" width="1" height="1" fill="#808080"/><rect x="358" y="46" width="1" height="1" fill="#808080"/><rect x="361" y="46" width="1" height="1" fill="#808080"/><rect x="363" y="46" width="1" height="1" fill="#808080"/><rect x="352" y="47" width="1" height="1" fill="#808080"/><rect x="356" y="47" width="1" height="1" fill="#808080"/><rect x="358" y="47" width="1" height="1" fill="#808080"/><rect x="361" y="47" width="1" height="1" fill="#808080"/><rect x="363" y="47" width="1" height="1" fill="#808080"/><rect x="352" y="48" width="1" height="1" fill="#808080"/><rect x="356" y="48" width="1" height="1" fill="#808080"/><rect x="358" y="48" width="1" height="1" fill="#808080"/><rect x="361" y="48" width="1" height="1" fill="#808080"/><rect x="363" y="48" width="1" height="1" fill="#808080"/><rect x="353" y="49" width="3" height="1" fill="#808080"/><rect x="358" y="49" width="1" height="1" fill="#808080"/><rect x="361" y="49" width="1" height="1" fill="#808080"/><rect x="363" y="49" width="1" height="1" fill="#808080"/><rect x="383" y="35" width="3" height="1" fill="#808080"/><rect x="382" y="36" width="1" height="1" fill="#808080"/><rect x="383" y="37" width="1" height="1" fill="#808080"/><rect x="383" y="38" width="3" height="1" fill="#808080"/><rect x="382" y="39" width="1" height="1" fill="#808080"/><rect x="386" y="39" width="1" height="1" fill="#808080"/><rect x="389" y="39" width="1" height="1" fill="#808080"/><rect x="382" y="40" width="1" height="1" fill="#808080"/><rect x="386" y="40" width="1" height="1" fill="#808080"/><rect x="389" y="40" width="1" height="1" fill="#808080"/><rect x="382" y="41" width="1" height="1" fill="#808080"/><rect x="386" y="41" width="1" height="1" fill="#808080"/><rect x="388" y="41" width="2" height="1" fill="#808080"/><rect x="383" y="42" width="3" height="1" fill="#808080"/><rect x="388" y="42" width="2" height="1" fill="#808080"/><rect x="379" y="44" width="1" height="1" fill="#808080"/><rect x="383" y="44" width="1" height="1" fill="#808080"/><rect x="386" y="44" width="3" height="1" fill="#808080"/><rect x="379" y="45" width="2" height="1" fill="#808080"/><rect x="382" y="45" width="2" height="1" fill="#808080"/><rect x="385" y="45" width="1" height="1" fill="#808080"/><rect x="379" y="46" width="1" height="1" fill="#808080"/><rect x="381" y="46" width="1" height="1" fill="#808080"/><rect x="383" y="46" width="1" height="1" fill="#808080"/><rect x="386" y="46" width="3" height="1" fill="#808080"/><rect x="379" y="47" width="1" height="1" fill="#808080"/><rect x="383" y="47" width="1" height="1" fill="#808080"/><rect x="389" y="47" width="1" height="1" fill="#808080"/><rect x="379" y="48" width="1" height="1" fill="#808080"/><rect x="383" y="48" width="1" height="1" fill="#808080"/><rect x="385" y="48" width="4" height="1" fill="#808080"/><rect x="408" y="35" width="3" height="1" fill="#808080"/><rect x="407" y="36" width="1" height="1" fill="#808080"/><rect x="408" y="37" width="1" height="1" fill="#808080"/><rect x="408" y="38" width="3" height="1" fill="#808080"/><rect x="407" y="39" width="1" height="1" fill="#808080"/><rect x="411" y="39" width="1" height="1" fill="#808080"/><rect x="414" y="39" width="1" height="1" fill="#808080"/><rect x="407" y="40" width="1" height="1" fill="#808080"/><rect x="411" y="40" width="1" height="1" fill="#808080"/><rect x="414" y="40" width="1" height="1" fill="#808080"/><rect x="407" y="41" width="1" height="1" fill="#808080"/><rect x="411" y="41" width="1" height="1" fill="#808080"/><rect x="413" y="41" width="2" height="1" fill="#808080"/><rect x="408" y="42" width="3" height="1" fill="#808080"/><rect x="413" y="42" width="2" height="1" fill="#808080"/><rect x="404" y="44" width="1" height="1" fill="#808080"/><rect x="408" y="44" width="1" height="1" fill="#808080"/><rect x="411" y="44" width="3" height="1" fill="#808080"/><rect x="404" y="45" width="2" height="1" fill="#808080"/><rect x="407" y="45" width="2" height="1" fill="#808080"/><rect x="411" y="45" width="1" height="1" fill="#808080"/><rect x="414" y="45" width="1" height="1" fill="#808080"/><rect x="404" y="46" width="1" height="1" fill="#808080"/><rect x="406" y="46" width="1" height="1" fill="#808080"/><rect x="408" y="46" width="1" height="1" fill="#808080"/><rect x="411" y="46" width="3" height="1" fill="#808080"/><rect x="404" y="47" width="1" height="1" fill="#808080"/><rect x="408" y="47" width="1" height="1" fill="#808080"/><rect x="411" y="47" width="1" height="1" fill="#808080"/><rect x="413" y="47" width="1" height="1" fill="#808080"/><rect x="404" y="48" width="1" height="1" fill="#808080"/><rect x="408" y="48" width="1" height="1" fill="#808080"/><rect x="411" y="48" width="1" height="1" fill="#808080"/><rect x="414" y="48" width="1" height="1" fill="#808080"/><rect x="443" y="35" width="1" height="1" fill="#808080"/><rect x="443" y="36" width="2" height="1" fill="#808080"/><rect x="435" y="37" width="1" height="1" fill="#808080"/><rect x="438" y="37" width="9" height="1" fill="#808080"/><rect x="434" y="38" width="2" height="1" fill="#808080"/><rect x="443" y="38" width="2" height="1" fill="#808080"/><rect x="432" y="39" width="9" height="1" fill="#808080"/><rect x="443" y="39" width="1" height="1" fill="#808080"/><rect x="434" y="40" width="2" height="1" fill="#808080"/><rect x="435" y="41" width="1" height="1" fill="#808080"/><rect x="439" y="44" width="2" height="1" fill="#808080"/><rect x="441" y="45" width="1" height="1" fill="#808080"/><rect x="439" y="46" width="3" height="1" fill="#808080"/><rect x="438" y="47" width="1" height="1" fill="#808080"/><rect x="441" y="47" width="1" height="1" fill="#808080"/><rect x="438" y="48" width="1" height="1" fill="#808080"/><rect x="441" y="48" width="1" height="1" fill="#808080"/><rect x="439" y="49" width="3" height="1" fill="#808080"/><rect x="469" y="35" width="3" height="1" fill="#000"/><rect x="468" y="36" width="1" height="1" fill="#000"/><rect x="469" y="36" width="3" height="1" fill="#fff"/><rect x="472" y="36" width="1" height="1" fill="#000"/><rect x="467" y="37" width="1" height="1" fill="#000"/><rect x="468" y="37" width="5" height="1" fill="#fff"/><rect x="473" y="37" width="1" height="1" fill="#000"/><rect x="466" y="38" width="1" height="1" fill="#000"/><rect x="467" y="38" width="3" height="1" fill="#fff"/><rect x="470" y="38" width="1" height="1" fill="#000"/><rect x="471" y="38" width="3" height="1" fill="#fff"/><rect x="474" y="38" width="1" height="1" fill="#000"/><rect x="466" y="39" width="1" height="1" fill="#000"/><rect x="467" y="39" width="3" height="1" fill="#fff"/><rect x="470" y="39" width="3" height="1" fill="#000"/><rect x="473" y="39" width="1" height="1" fill="#fff"/><rect x="474" y="39" width="1" height="1" fill="#000"/><rect x="466" y="40" width="1" height="1" fill="#000"/><rect x="467" y="40" width="7" height="1" fill="#fff"/><rect x="474" y="40" width="1" height="1" fill="#000"/><rect x="467" y="41" width="1" height="1" fill="#000"/><rect x="468" y="41" width="5" height="1" fill="#fff"/><rect x="473" y="41" width="1" height="1" fill="#000"/><rect x="468" y="42" width="1" height="1" fill="#000"/><rect x="469" y="42" width="3" height="1" fill="#fff"/><rect x="472" y="42" width="1" height="1" fill="#000"/><rect x="469" y="43" width="3" height="1" fill="#000"/><rect x="466" y="44" width="1" height="1" fill="#ff0000"/><rect x="465" y="45" width="2" height="1" fill="#ff0000"/><rect x="464" y="46" width="12" height="1" fill="#ff0000"/><rect x="464" y="47" width="2" height="1" fill="#c00000"/><rect x="466" y="47" width="8" height="1" fill="#ff0000"/><rect x="474" y="47" width="2" height="1" fill="#c00000"/><rect x="465" y="48" width="2" height="1" fill="#ff0000"/><rect x="466" y="49" width="1" height="1" fill="#ff0000"/><rect x="523" y="35" width="3" height="1" fill="#000"/><rect x="522" y="36" width="1" height="1" fill="#000"/><rect x="523" y="36" width="3" height="1" fill="#fff"/><rect x="526" y="36" width="1" height="1" fill="#000"/><rect x="521" y="37" width="1" height="1" fill="#000"/><rect x="522" y="37" width="5" height="1" fill="#fff"/><rect x="527" y="37" width="1" height="1" fill="#000"/><rect x="520" y="38" width="1" height="1" fill="#000"/><rect x="521" y="38" width="3" height="1" fill="#fff"/><rect x="524" y="38" width="1" height="1" fill="#000"/><rect x="525" y="38" width="3" height="1" fill="#fff"/><rect x="528" y="38" width="1" height="1" fill="#000"/><rect x="520" y="39" width="1" height="1" fill="#000"/><rect x="521" y="39" width="3" height="1" fill="#fff"/><rect x="524" y="39" width="3" height="1" fill="#000"/><rect x="527" y="39" width="1" height="1" fill="#fff"/><rect x="528" y="39" width="1" height="1" fill="#000"/><rect x="520" y="40" width="1" height="1" fill="#000"/><rect x="521" y="40" width="7" height="1" fill="#fff"/><rect x="528" y="40" width="1" height="1" fill="#000"/><rect x="521" y="41" width="1" height="1" fill="#000"/><rect x="522" y="41" width="5" height="1" fill="#fff"/><rect x="527" y="41" width="1" height="1" fill="#000"/><rect x="522" y="42" width="1" height="1" fill="#000"/><rect x="523" y="42" width="3" height="1" fill="#fff"/><rect x="526" y="42" width="1" height="1" fill="#000"/><rect x="523" y="43" width="3" height="1" fill="#000"/><rect x="529" y="44" width="1" height="1" fill="#0a8a0a"/><rect x="529" y="45" width="2" height="1" fill="#0a8a0a"/><rect x="519" y="46" width="1" height="1" fill="#0a8a0a"/><rect x="522" y="46" width="1" height="1" fill="#0a8a0a"/><rect x="524" y="46" width="1" height="1" fill="#0a8a0a"/><rect x="526" y="46" width="2" height="1" fill="#0a8a0a"/><rect x="529" y="46" width="3" height="1" fill="#0a8a0a"/><rect x="519" y="47" width="1" height="1" fill="#0a8a0a"/><rect x="522" y="47" width="1" height="1" fill="#0a8a0a"/><rect x="524" y="47" width="1" height="1" fill="#0a8a0a"/><rect x="526" y="47" width="2" height="1" fill="#0a8a0a"/><rect x="529" y="47" width="4" height="1" fill="#0a8a0a"/><rect x="519" y="48" width="1" height="1" fill="#0a8a0a"/><rect x="522" y="48" width="1" height="1" fill="#0a8a0a"/><rect x="524" y="48" width="1" height="1" fill="#0a8a0a"/><rect x="526" y="48" width="2" height="1" fill="#0a8a0a"/><rect x="529" y="48" width="3" height="1" fill="#0a8a0a"/><rect x="529" y="49" width="2" height="1" fill="#0a8a0a"/><rect x="529" y="50" width="1" height="1" fill="#0a8a0a"/><rect x="544" y="35" width="3" height="1" fill="#000"/><rect x="543" y="36" width="1" height="1" fill="#000"/><rect x="544" y="36" width="3" height="1" fill="#fff"/><rect x="547" y="36" width="1" height="1" fill="#000"/><rect x="542" y="37" width="1" height="1" fill="#000"/><rect x="543" y="37" width="5" height="1" fill="#fff"/><rect x="548" y="37" width="1" height="1" fill="#000"/><rect x="541" y="38" width="1" height="1" fill="#000"/><rect x="542" y="38" width="3" height="1" fill="#fff"/><rect x="545" y="38" width="1" height="1" fill="#000"/><rect x="546" y="38" width="3" height="1" fill="#fff"/><rect x="549" y="38" width="1" height="1" fill="#000"/><rect x="541" y="39" width="1" height="1" fill="#000"/><rect x="542" y="39" width="3" height="1" fill="#fff"/><rect x="545" y="39" width="3" height="1" fill="#000"/><rect x="548" y="39" width="1" height="1" fill="#fff"/><rect x="549" y="39" width="1" height="1" fill="#000"/><rect x="541" y="40" width="1" height="1" fill="#000"/><rect x="542" y="40" width="7" height="1" fill="#fff"/><rect x="549" y="40" width="1" height="1" fill="#000"/><rect x="542" y="41" width="1" height="1" fill="#000"/><rect x="543" y="41" width="5" height="1" fill="#fff"/><rect x="548" y="41" width="1" height="1" fill="#000"/><rect x="552" y="41" width="2" height="1" fill="#4a6a9a"/><rect x="543" y="42" width="1" height="1" fill="#000"/><rect x="544" y="42" width="3" height="1" fill="#fff"/><rect x="547" y="42" width="1" height="1" fill="#000"/><rect x="552" y="42" width="2" height="1" fill="#4a6a9a"/><rect x="544" y="43" width="3" height="1" fill="#000"/><rect x="550" y="44" width="1" height="1" fill="#4a6a9a"/><rect x="542" y="45" width="2" height="1" fill="#000070"/><rect x="550" y="45" width="1" height="1" fill="#4a6a9a"/><rect x="542" y="46" width="2" height="1" fill="#000070"/><rect x="548" y="46" width="1" height="1" fill="#4a6a9a"/><rect x="541" y="47" width="1" height="1" fill="#000"/><rect x="544" y="47" width="1" height="1" fill="#000"/><rect x="548" y="47" width="1" height="1" fill="#4a6a9a"/><rect x="540" y="48" width="1" height="1" fill="#000"/><rect x="545" y="48" width="2" height="1" fill="#000070"/><rect x="538" y="49" width="2" height="1" fill="#000070"/><rect x="545" y="49" width="2" height="1" fill="#000070"/><rect x="538" y="50" width="2" height="1" fill="#000070"/><rect x="575" y="37" width="1" height="1" fill="#000"/><rect x="576" y="37" width="2" height="1" fill="#ffff00"/><rect x="578" y="37" width="1" height="1" fill="#000"/><rect x="579" y="37" width="2" height="1" fill="#ffff00"/><rect x="581" y="37" width="1" height="1" fill="#000"/><rect x="575" y="38" width="1" height="1" fill="#000"/><rect x="576" y="38" width="2" height="1" fill="#ffff00"/><rect x="578" y="38" width="1" height="1" fill="#000"/><rect x="579" y="38" width="2" height="1" fill="#ffff00"/><rect x="581" y="38" width="1" height="1" fill="#000"/><rect x="574" y="39" width="1" height="1" fill="#000"/><rect x="575" y="39" width="2" height="1" fill="#ffff00"/><rect x="577" y="39" width="1" height="1" fill="#000"/><rect x="578" y="39" width="2" height="1" fill="#ffff00"/><rect x="580" y="39" width="1" height="1" fill="#000"/><rect x="574" y="40" width="1" height="1" fill="#000"/><rect x="575" y="40" width="2" height="1" fill="#ffff00"/><rect x="577" y="40" width="1" height="1" fill="#000"/><rect x="578" y="40" width="2" height="1" fill="#ffff00"/><rect x="580" y="40" width="1" height="1" fill="#000"/><rect x="573" y="41" width="1" height="1" fill="#000"/><rect x="574" y="41" width="2" height="1" fill="#ffff00"/><rect x="576" y="41" width="1" height="1" fill="#000"/><rect x="577" y="41" width="2" height="1" fill="#ffff00"/><rect x="579" y="41" width="1" height="1" fill="#000"/><rect x="573" y="42" width="1" height="1" fill="#000"/><rect x="574" y="42" width="2" height="1" fill="#ffff00"/><rect x="576" y="42" width="1" height="1" fill="#000"/><rect x="577" y="42" width="2" height="1" fill="#ffff00"/><rect x="579" y="42" width="1" height="1" fill="#000"/><rect x="572" y="43" width="2" height="1" fill="#000"/><rect x="574" y="43" width="4" height="1" fill="#ffff00"/><rect x="578" y="43" width="1" height="1" fill="#000"/><rect x="572" y="44" width="1" height="1" fill="#000"/><rect x="573" y="44" width="2" height="1" fill="#fff"/><rect x="575" y="44" width="3" height="1" fill="#000"/><rect x="572" y="45" width="1" height="1" fill="#000"/><rect x="573" y="45" width="4" height="1" fill="#fff"/><rect x="577" y="45" width="1" height="1" fill="#000"/><rect x="572" y="46" width="1" height="1" fill="#000"/><rect x="573" y="46" width="3" height="1" fill="#fff"/><rect x="576" y="46" width="2" height="1" fill="#000"/><rect x="572" y="47" width="2" height="1" fill="#000"/><rect x="574" y="47" width="1" height="1" fill="#fff"/><rect x="575" y="47" width="2" height="1" fill="#000"/><rect x="572" y="48" width="4" height="1" fill="#000"/><rect x="572" y="49" width="3" height="1" fill="#000"/><rect x="599" y="36" width="8" height="1" fill="#000"/><rect x="599" y="37" width="1" height="1" fill="#000"/><rect x="600" y="37" width="5" height="1" fill="#ffff00"/><rect x="605" y="37" width="2" height="1" fill="#000"/><rect x="598" y="38" width="1" height="1" fill="#000"/><rect x="599" y="38" width="5" height="1" fill="#ffff00"/><rect x="604" y="38" width="1" height="1" fill="#000"/><rect x="598" y="39" width="1" height="1" fill="#000"/><rect x="599" y="39" width="4" height="1" fill="#ffff00"/><rect x="603" y="39" width="4" height="1" fill="#000"/><rect x="597" y="40" width="1" height="1" fill="#000"/><rect x="598" y="40" width="8" height="1" fill="#ffff00"/><rect x="606" y="40" width="1" height="1" fill="#000"/><rect x="597" y="41" width="5" height="1" fill="#000"/><rect x="602" y="41" width="3" height="1" fill="#ffff00"/><rect x="605" y="41" width="1" height="1" fill="#000"/><rect x="600" y="42" width="1" height="1" fill="#000"/><rect x="601" y="42" width="3" height="1" fill="#ffff00"/><rect x="604" y="42" width="1" height="1" fill="#000"/><rect x="600" y="43" width="1" height="1" fill="#000"/><rect x="601" y="43" width="2" height="1" fill="#ffff00"/><rect x="603" y="43" width="4" height="1" fill="#000"/><rect x="599" y="44" width="1" height="1" fill="#000"/><rect x="600" y="44" width="5" height="1" fill="#ffff00"/><rect x="605" y="44" width="1" height="1" fill="#000"/><rect x="599" y="45" width="3" height="1" fill="#000"/><rect x="602" y="45" width="2" height="1" fill="#ffff00"/><rect x="604" y="45" width="1" height="1" fill="#000"/><rect x="601" y="46" width="1" height="1" fill="#000"/><rect x="602" y="46" width="1" height="1" fill="#ffff00"/><rect x="603" y="46" width="1" height="1" fill="#000"/><rect x="601" y="47" width="2" height="1" fill="#000"/><rect x="600" y="48" width="2" height="1" fill="#000"/><rect x="600" y="49" width="1" height="1" fill="#000"/><rect x="628" y="38" width="3" height="1" fill="#808080"/><rect x="627" y="39" width="1" height="1" fill="#808080"/><rect x="628" y="39" width="3" height="1" fill="#b0b0b0"/><rect x="631" y="39" width="1" height="1" fill="#808080"/><rect x="626" y="40" width="1" height="1" fill="#808080"/><rect x="627" y="40" width="2" height="1" fill="#b0b0b0"/><rect x="629" y="40" width="1" height="1" fill="#808080"/><rect x="630" y="40" width="2" height="1" fill="#b0b0b0"/><rect x="632" y="40" width="8" height="1" fill="#808080"/><rect x="626" y="41" width="1" height="1" fill="#808080"/><rect x="627" y="41" width="1" height="1" fill="#b0b0b0"/><rect x="628" y="41" width="1" height="1" fill="#808080"/><rect x="629" y="41" width="1" height="1" fill="#fff"/><rect x="630" y="41" width="1" height="1" fill="#808080"/><rect x="631" y="41" width="9" height="1" fill="#b0b0b0"/><rect x="640" y="41" width="1" height="1" fill="#808080"/><rect x="626" y="42" width="1" height="1" fill="#808080"/><rect x="627" y="42" width="1" height="1" fill="#b0b0b0"/><rect x="628" y="42" width="1" height="1" fill="#808080"/><rect x="629" y="42" width="1" height="1" fill="#fff"/><rect x="630" y="42" width="1" height="1" fill="#808080"/><rect x="631" y="42" width="9" height="1" fill="#b0b0b0"/><rect x="640" y="42" width="1" height="1" fill="#808080"/><rect x="626" y="43" width="1" height="1" fill="#808080"/><rect x="627" y="43" width="2" height="1" fill="#b0b0b0"/><rect x="629" y="43" width="1" height="1" fill="#808080"/><rect x="630" y="43" width="2" height="1" fill="#b0b0b0"/><rect x="632" y="43" width="4" height="1" fill="#808080"/><rect x="636" y="43" width="3" height="1" fill="#b0b0b0"/><rect x="639" y="43" width="1" height="1" fill="#808080"/><rect x="627" y="44" width="1" height="1" fill="#808080"/><rect x="628" y="44" width="3" height="1" fill="#b0b0b0"/><rect x="631" y="44" width="1" height="1" fill="#808080"/><rect x="636" y="44" width="1" height="1" fill="#808080"/><rect x="637" y="44" width="2" height="1" fill="#b0b0b0"/><rect x="639" y="44" width="1" height="1" fill="#808080"/><rect x="628" y="45" width="3" height="1" fill="#808080"/><rect x="636" y="45" width="1" height="1" fill="#808080"/><rect x="637" y="45" width="2" height="1" fill="#b0b0b0"/><rect x="639" y="45" width="1" height="1" fill="#808080"/><rect x="637" y="46" width="2" height="1" fill="#808080"/><rect x="657" y="35" width="13" height="1" fill="#fff"/><rect x="657" y="36" width="1" height="1" fill="#fff"/><rect x="658" y="36" width="2" height="1" fill="#000"/><rect x="660" y="36" width="1" height="1" fill="#fff"/><rect x="661" y="36" width="2" height="1" fill="#000"/><rect x="663" y="36" width="1" height="1" fill="#fff"/><rect x="664" y="36" width="2" height="1" fill="#000"/><rect x="666" y="36" width="1" height="1" fill="#fff"/><rect x="667" y="36" width="2" height="1" fill="#000"/><rect x="669" y="36" width="1" height="1" fill="#fff"/><rect x="670" y="36" width="1" height="1" fill="#909090"/><rect x="657" y="37" width="13" height="1" fill="#fff"/><rect x="670" y="37" width="1" height="1" fill="#909090"/><rect x="657" y="38" width="1" height="1" fill="#fff"/><rect x="658" y="38" width="2" height="1" fill="#000"/><rect x="660" y="38" width="1" height="1" fill="#fff"/><rect x="661" y="38" width="2" height="1" fill="#000"/><rect x="663" y="38" width="1" height="1" fill="#fff"/><rect x="664" y="38" width="2" height="1" fill="#000"/><rect x="666" y="38" width="1" height="1" fill="#fff"/><rect x="667" y="38" width="2" height="1" fill="#000"/><rect x="669" y="38" width="1" height="1" fill="#fff"/><rect x="670" y="38" width="1" height="1" fill="#909090"/><rect x="657" y="39" width="13" height="1" fill="#fff"/><rect x="670" y="39" width="1" height="1" fill="#909090"/><rect x="657" y="40" width="1" height="1" fill="#fff"/><rect x="658" y="40" width="2" height="1" fill="#000"/><rect x="660" y="40" width="1" height="1" fill="#fff"/><rect x="661" y="40" width="2" height="1" fill="#000"/><rect x="663" y="40" width="1" height="1" fill="#fff"/><rect x="664" y="40" width="2" height="1" fill="#000"/><rect x="666" y="40" width="1" height="1" fill="#fff"/><rect x="667" y="40" width="2" height="1" fill="#000"/><rect x="669" y="40" width="1" height="1" fill="#fff"/><rect x="670" y="40" width="2" height="1" fill="#000"/><rect x="657" y="41" width="13" height="1" fill="#fff"/><rect x="671" y="41" width="1" height="1" fill="#000"/><rect x="657" y="42" width="1" height="1" fill="#fff"/><rect x="658" y="42" width="2" height="1" fill="#000"/><rect x="660" y="42" width="1" height="1" fill="#fff"/><rect x="661" y="42" width="2" height="1" fill="#000"/><rect x="663" y="42" width="1" height="1" fill="#fff"/><rect x="664" y="42" width="2" height="1" fill="#000"/><rect x="666" y="42" width="1" height="1" fill="#fff"/><rect x="667" y="42" width="2" height="1" fill="#000"/><rect x="669" y="42" width="1" height="1" fill="#fff"/><rect x="671" y="42" width="1" height="1" fill="#000"/><rect x="657" y="43" width="13" height="1" fill="#fff"/><rect x="671" y="43" width="1" height="1" fill="#000"/><rect x="658" y="44" width="13" height="1" fill="#909090"/><rect x="671" y="44" width="1" height="1" fill="#000"/><rect x="671" y="45" width="1" height="1" fill="#000"/><rect x="657" y="46" width="10" height="1" fill="#000080"/><rect x="669" y="46" width="1" height="1" fill="#000"/><rect x="671" y="46" width="1" height="1" fill="#000"/><rect x="657" y="47" width="1" height="1" fill="#000080"/><rect x="658" y="47" width="8" height="1" fill="#a0a0a0"/><rect x="666" y="47" width="1" height="1" fill="#000080"/><rect x="668" y="47" width="2" height="1" fill="#000"/><rect x="671" y="47" width="1" height="1" fill="#000"/><rect x="657" y="48" width="1" height="1" fill="#000080"/><rect x="658" y="48" width="1" height="1" fill="#a0a0a0"/><rect x="659" y="48" width="1" height="1" fill="#00ff00"/><rect x="660" y="48" width="1" height="1" fill="#a0a0a0"/><rect x="661" y="48" width="4" height="1" fill="#000080"/><rect x="665" y="48" width="1" height="1" fill="#a0a0a0"/><rect x="666" y="48" width="1" height="1" fill="#000080"/><rect x="667" y="48" width="5" height="1" fill="#000"/><rect x="657" y="49" width="1" height="1" fill="#000080"/><rect x="658" y="49" width="8" height="1" fill="#a0a0a0"/><rect x="666" y="49" width="1" height="1" fill="#000080"/><rect x="668" y="49" width="2" height="1" fill="#000"/><rect x="657" y="50" width="10" height="1" fill="#000080"/><rect x="669" y="50" width="1" height="1" fill="#000"/><rect x="87" y="33" width="1" height="21" fill="#f8f8f8"/><rect x="89" y="33" width="1" height="21" fill="#f8f8f8"/><rect x="88" y="32" width="1" height="1" fill="#f8f8f8"/><rect x="88" y="54" width="1" height="1" fill="#f8f8f8"/><rect x="88" y="33" width="1" height="21" fill="#888888"/><rect x="143" y="33" width="1" height="21" fill="#f8f8f8"/><rect x="145" y="33" width="1" height="21" fill="#f8f8f8"/><rect x="144" y="32" width="1" height="1" fill="#f8f8f8"/><rect x="144" y="54" width="1" height="1" fill="#f8f8f8"/><rect x="144" y="33" width="1" height="21" fill="#888888"/><rect x="174" y="33" width="1" height="21" fill="#f8f8f8"/><rect x="176" y="33" width="1" height="21" fill="#f8f8f8"/><rect x="175" y="32" width="1" height="1" fill="#f8f8f8"/><rect x="175" y="54" width="1" height="1" fill="#f8f8f8"/><rect x="175" y="33" width="1" height="21" fill="#888888"/><rect x="205" y="33" width="1" height="21" fill="#f8f8f8"/><rect x="207" y="33" width="1" height="21" fill="#f8f8f8"/><rect x="206" y="32" width="1" height="1" fill="#f8f8f8"/><rect x="206" y="54" width="1" height="1" fill="#f8f8f8"/><rect x="206" y="33" width="1" height="21" fill="#888888"/><rect x="261" y="33" width="1" height="21" fill="#f8f8f8"/><rect x="263" y="33" width="1" height="21" fill="#f8f8f8"/><rect x="262" y="32" width="1" height="1" fill="#f8f8f8"/><rect x="262" y="54" width="1" height="1" fill="#f8f8f8"/><rect x="262" y="33" width="1" height="21" fill="#888888"/><rect x="317" y="33" width="1" height="21" fill="#f8f8f8"/><rect x="319" y="33" width="1" height="21" fill="#f8f8f8"/><rect x="318" y="32" width="1" height="1" fill="#f8f8f8"/><rect x="318" y="54" width="1" height="1" fill="#f8f8f8"/><rect x="318" y="33" width="1" height="21" fill="#888888"/><rect x="423" y="33" width="1" height="21" fill="#f8f8f8"/><rect x="425" y="33" width="1" height="21" fill="#f8f8f8"/><rect x="424" y="32" width="1" height="1" fill="#f8f8f8"/><rect x="424" y="54" width="1" height="1" fill="#f8f8f8"/><rect x="424" y="33" width="1" height="21" fill="#888888"/><rect x="454" y="33" width="1" height="21" fill="#f8f8f8"/><rect x="456" y="33" width="1" height="21" fill="#f8f8f8"/><rect x="455" y="32" width="1" height="1" fill="#f8f8f8"/><rect x="455" y="54" width="1" height="1" fill="#f8f8f8"/><rect x="455" y="33" width="1" height="21" fill="#888888"/><rect x="560" y="33" width="1" height="21" fill="#f8f8f8"/><rect x="562" y="33" width="1" height="21" fill="#f8f8f8"/><rect x="561" y="32" width="1" height="1" fill="#f8f8f8"/><rect x="561" y="54" width="1" height="1" fill="#f8f8f8"/><rect x="561" y="33" width="1" height="21" fill="#888888"/><rect x="617" y="33" width="1" height="21" fill="#f8f8f8"/><rect x="619" y="33" width="1" height="21" fill="#f8f8f8"/><rect x="618" y="32" width="1" height="1" fill="#f8f8f8"/><rect x="618" y="54" width="1" height="1" fill="#f8f8f8"/><rect x="618" y="33" width="1" height="21" fill="#888888"/><rect x="648" y="33" width="1" height="21" fill="#f8f8f8"/><rect x="650" y="33" width="1" height="21" fill="#f8f8f8"/><rect x="649" y="32" width="1" height="1" fill="#f8f8f8"/><rect x="649" y="54" width="1" height="1" fill="#f8f8f8"/><rect x="649" y="33" width="1" height="21" fill="#888888"/><rect x="30" y="95" width="203" height="16" fill="#000080"/><rect x="38" y="111" width="1" height="1" fill="#888888"/><rect x="38" y="113" width="1" height="1" fill="#888888"/><rect x="38" y="115" width="1" height="1" fill="#888888"/><rect x="38" y="117" width="1" height="1" fill="#888888"/><rect x="38" y="119" width="1" height="1" fill="#888888"/><rect x="38" y="121" width="1" height="1" fill="#888888"/><rect x="38" y="123" width="1" height="1" fill="#888888"/><rect x="38" y="125" width="1" height="1" fill="#888888"/><rect x="38" y="127" width="1" height="1" fill="#888888"/><rect x="38" y="129" width="1" height="1" fill="#888888"/><rect x="38" y="131" width="1" height="1" fill="#888888"/><rect x="38" y="133" width="1" height="1" fill="#888888"/><rect x="38" y="135" width="1" height="1" fill="#888888"/><rect x="38" y="137" width="1" height="1" fill="#888888"/><rect x="38" y="139" width="1" height="1" fill="#888888"/><rect x="38" y="141" width="1" height="1" fill="#888888"/><rect x="38" y="143" width="1" height="1" fill="#888888"/><rect x="38" y="145" width="1" height="1" fill="#888888"/><rect x="38" y="147" width="1" height="1" fill="#888888"/><rect x="38" y="149" width="1" height="1" fill="#888888"/><rect x="38" y="151" width="1" height="1" fill="#888888"/><rect x="38" y="153" width="1" height="1" fill="#888888"/><rect x="38" y="155" width="1" height="1" fill="#888888"/><rect x="38" y="157" width="1" height="1" fill="#888888"/><rect x="38" y="159" width="1" height="1" fill="#888888"/><rect x="38" y="161" width="1" height="1" fill="#888888"/><rect x="38" y="163" width="1" height="1" fill="#888888"/><rect x="38" y="165" width="1" height="1" fill="#888888"/><rect x="38" y="167" width="1" height="1" fill="#888888"/><rect x="38" y="169" width="1" height="1" fill="#888888"/><rect x="38" y="171" width="1" height="1" fill="#888888"/><rect x="38" y="173" width="1" height="1" fill="#888888"/><rect x="38" y="175" width="1" height="1" fill="#888888"/><rect x="38" y="177" width="1" height="1" fill="#888888"/><rect x="38" y="179" width="1" height="1" fill="#888888"/><rect x="38" y="181" width="1" height="1" fill="#888888"/><rect x="38" y="183" width="1" height="1" fill="#888888"/><rect x="38" y="185" width="1" height="1" fill="#888888"/><rect x="38" y="187" width="1" height="1" fill="#888888"/><rect x="38" y="189" width="1" height="1" fill="#888888"/><rect x="38" y="191" width="1" height="1" fill="#888888"/><rect x="38" y="193" width="1" height="1" fill="#888888"/><rect x="38" y="195" width="1" height="1" fill="#888888"/><rect x="38" y="197" width="1" height="1" fill="#888888"/><rect x="38" y="199" width="1" height="1" fill="#888888"/><rect x="38" y="201" width="1" height="1" fill="#888888"/><rect x="38" y="203" width="1" height="1" fill="#888888"/><rect x="38" y="205" width="1" height="1" fill="#888888"/><rect x="38" y="207" width="1" height="1" fill="#888888"/><rect x="38" y="209" width="1" height="1" fill="#888888"/><rect x="38" y="211" width="1" height="1" fill="#888888"/><rect x="38" y="213" width="1" height="1" fill="#888888"/><rect x="38" y="215" width="1" height="1" fill="#888888"/><rect x="38" y="217" width="1" height="1" fill="#888888"/><rect x="38" y="219" width="1" height="1" fill="#888888"/><rect x="38" y="221" width="1" height="1" fill="#888888"/><rect x="38" y="223" width="1" height="1" fill="#888888"/><rect x="38" y="225" width="1" height="1" fill="#888888"/><rect x="38" y="227" width="1" height="1" fill="#888888"/><rect x="38" y="229" width="1" height="1" fill="#888888"/><rect x="38" y="231" width="1" height="1" fill="#888888"/><rect x="38" y="233" width="1" height="1" fill="#888888"/><rect x="38" y="235" width="1" height="1" fill="#888888"/><rect x="38" y="237" width="1" height="1" fill="#888888"/><rect x="38" y="239" width="1" height="1" fill="#888888"/><rect x="38" y="241" width="1" height="1" fill="#888888"/><rect x="38" y="243" width="1" height="1" fill="#888888"/><rect x="38" y="245" width="1" height="1" fill="#888888"/><rect x="38" y="247" width="1" height="1" fill="#888888"/><rect x="16" y="99" width="7" height="1" fill="#919191"/><rect x="16" y="107" width="7" height="1" fill="#919191"/><rect x="15" y="100" width="1" height="7" fill="#919191"/><rect x="23" y="100" width="1" height="7" fill="#919191"/><rect x="15" y="99" width="1" height="1" fill="#cfcfcf"/><rect x="23" y="99" width="1" height="1" fill="#cfcfcf"/><rect x="15" y="107" width="1" height="1" fill="#cfcfcf"/><rect x="23" y="107" width="1" height="1" fill="#cfcfcf"/><rect x="16" y="100" width="7" height="3" fill="#ffffff"/><rect x="16" y="103" width="7" height="2" fill="#f4f4f4"/><rect x="16" y="105" width="7" height="2" fill="#e2e2e2"/><rect x="17" y="103" width="5" height="1" fill="#3c5aa8"/><rect x="25" y="103" width="1" height="1" fill="#888888"/><rect x="27" y="103" width="1" height="1" fill="#888888"/><rect x="29" y="103" width="1" height="1" fill="#888888"/><rect x="31" y="96" width="16" height="15" fill="#000000"/><rect x="32" y="97" width="14" height="13" fill="#ffffff"/><rect x="34" y="99" width="3" height="1" fill="#000"/><rect x="34" y="102" width="3" height="1" fill="#000"/><rect x="33" y="100" width="1" height="2" fill="#000"/><rect x="37" y="100" width="1" height="2" fill="#000"/><rect x="34" y="100" width="3" height="2" fill="#ffff00"/><rect x="41" y="99" width="3" height="1" fill="#000"/><rect x="41" y="102" width="3" height="1" fill="#000"/><rect x="40" y="100" width="1" height="2" fill="#000"/><rect x="44" y="100" width="1" height="2" fill="#000"/><rect x="41" y="100" width="3" height="2" fill="#ffff00"/><rect x="37" y="105" width="3" height="1" fill="#000"/><rect x="37" y="108" width="3" height="1" fill="#000"/><rect x="36" y="106" width="1" height="2" fill="#000"/><rect x="40" y="106" width="1" height="2" fill="#000"/><rect x="37" y="106" width="3" height="2" fill="#ffff00"/><rect x="35" y="115" width="7" height="1" fill="#919191"/><rect x="35" y="123" width="7" height="1" fill="#919191"/><rect x="34" y="116" width="1" height="7" fill="#919191"/><rect x="42" y="116" width="1" height="7" fill="#919191"/><rect x="34" y="115" width="1" height="1" fill="#cfcfcf"/><rect x="42" y="115" width="1" height="1" fill="#cfcfcf"/><rect x="34" y="123" width="1" height="1" fill="#cfcfcf"/><rect x="42" y="123" width="1" height="1" fill="#cfcfcf"/><rect x="35" y="116" width="7" height="3" fill="#ffffff"/><rect x="35" y="119" width="7" height="2" fill="#f4f4f4"/><rect x="35" y="121" width="7" height="2" fill="#e2e2e2"/><rect x="36" y="119" width="5" height="1" fill="#3c5aa8"/><rect x="43" y="119" width="1" height="1" fill="#888888"/><rect x="45" y="119" width="1" height="1" fill="#888888"/><rect x="47" y="119" width="1" height="1" fill="#888888"/><rect x="54" y="112" width="5" height="1" fill="#000"/><rect x="51" y="115" width="11" height="9" fill="#fff"/><rect x="52" y="112" width="1" height="1" fill="#000"/><rect x="51" y="113" width="1" height="1" fill="#000"/><rect x="53" y="113" width="1" height="1" fill="#000"/><rect x="50" y="114" width="1" height="1" fill="#000"/><rect x="52" y="114" width="1" height="1" fill="#000"/><rect x="51" y="115" width="1" height="1" fill="#000"/><rect x="60" y="112" width="1" height="1" fill="#000"/><rect x="59" y="113" width="1" height="1" fill="#000"/><rect x="61" y="113" width="1" height="1" fill="#000"/><rect x="60" y="114" width="1" height="1" fill="#000"/><rect x="62" y="114" width="1" height="1" fill="#000"/><rect x="61" y="115" width="1" height="1" fill="#000"/><rect x="50" y="116" width="1" height="5" fill="#000"/><rect x="62" y="116" width="1" height="5" fill="#000"/><rect x="51" y="121" width="1" height="1" fill="#000"/><rect x="61" y="121" width="1" height="1" fill="#000"/><rect x="52" y="122" width="1" height="3" fill="#000"/><rect x="60" y="122" width="1" height="3" fill="#000"/><rect x="53" y="123" width="1" height="1" fill="#000"/><rect x="59" y="123" width="1" height="1" fill="#000"/><rect x="54" y="124" width="5" height="1" fill="#000"/><rect x="56" y="116" width="1" height="3" fill="#000"/><rect x="57" y="118" width="3" height="1" fill="#000"/><rect x="57" y="127" width="1" height="1" fill="#888888"/><rect x="57" y="129" width="1" height="1" fill="#888888"/><rect x="54" y="131" width="7" height="1" fill="#919191"/><rect x="54" y="139" width="7" height="1" fill="#919191"/><rect x="53" y="132" width="1" height="7" fill="#919191"/><rect x="61" y="132" width="1" height="7" fill="#919191"/><rect x="53" y="131" width="1" height="1" fill="#cfcfcf"/><rect x="61" y="131" width="1" height="1" fill="#cfcfcf"/><rect x="53" y="139" width="1" height="1" fill="#cfcfcf"/><rect x="61" y="139" width="1" height="1" fill="#cfcfcf"/><rect x="54" y="132" width="7" height="3" fill="#ffffff"/><rect x="54" y="135" width="7" height="2" fill="#f4f4f4"/><rect x="54" y="137" width="7" height="2" fill="#e2e2e2"/><rect x="55" y="135" width="5" height="1" fill="#3c5aa8"/><rect x="57" y="133" width="1" height="5" fill="#3c5aa8"/><rect x="63" y="135" width="1" height="1" fill="#888888"/><rect x="65" y="135" width="1" height="1" fill="#888888"/><rect x="67" y="135" width="1" height="1" fill="#888888"/><rect x="35" y="147" width="7" height="1" fill="#919191"/><rect x="35" y="155" width="7" height="1" fill="#919191"/><rect x="34" y="148" width="1" height="7" fill="#919191"/><rect x="42" y="148" width="1" height="7" fill="#919191"/><rect x="34" y="147" width="1" height="1" fill="#cfcfcf"/><rect x="42" y="147" width="1" height="1" fill="#cfcfcf"/><rect x="34" y="155" width="1" height="1" fill="#cfcfcf"/><rect x="42" y="155" width="1" height="1" fill="#cfcfcf"/><rect x="35" y="148" width="7" height="3" fill="#ffffff"/><rect x="35" y="151" width="7" height="2" fill="#f4f4f4"/><rect x="35" y="153" width="7" height="2" fill="#e2e2e2"/><rect x="36" y="151" width="5" height="1" fill="#3c5aa8"/><rect x="43" y="151" width="1" height="1" fill="#888888"/><rect x="45" y="151" width="1" height="1" fill="#888888"/><rect x="47" y="151" width="1" height="1" fill="#888888"/><rect x="54" y="144" width="5" height="1" fill="#000"/><rect x="51" y="147" width="11" height="9" fill="#fff"/><rect x="52" y="144" width="1" height="1" fill="#000"/><rect x="51" y="145" width="1" height="1" fill="#000"/><rect x="53" y="145" width="1" height="1" fill="#000"/><rect x="50" y="146" width="1" height="1" fill="#000"/><rect x="52" y="146" width="1" height="1" fill="#000"/><rect x="51" y="147" width="1" height="1" fill="#000"/><rect x="60" y="144" width="1" height="1" fill="#000"/><rect x="59" y="145" width="1" height="1" fill="#000"/><rect x="61" y="145" width="1" height="1" fill="#000"/><rect x="60" y="146" width="1" height="1" fill="#000"/><rect x="62" y="146" width="1" height="1" fill="#000"/><rect x="61" y="147" width="1" height="1" fill="#000"/><rect x="50" y="148" width="1" height="5" fill="#000"/><rect x="62" y="148" width="1" height="5" fill="#000"/><rect x="51" y="153" width="1" height="1" fill="#000"/><rect x="61" y="153" width="1" height="1" fill="#000"/><rect x="52" y="154" width="1" height="3" fill="#000"/><rect x="60" y="154" width="1" height="3" fill="#000"/><rect x="53" y="155" width="1" height="1" fill="#000"/><rect x="59" y="155" width="1" height="1" fill="#000"/><rect x="54" y="156" width="5" height="1" fill="#000"/><rect x="56" y="148" width="1" height="3" fill="#000"/><rect x="57" y="150" width="3" height="1" fill="#000"/><rect x="57" y="159" width="1" height="1" fill="#888888"/><rect x="57" y="161" width="1" height="1" fill="#888888"/><rect x="54" y="163" width="7" height="1" fill="#919191"/><rect x="54" y="171" width="7" height="1" fill="#919191"/><rect x="53" y="164" width="1" height="7" fill="#919191"/><rect x="61" y="164" width="1" height="7" fill="#919191"/><rect x="53" y="163" width="1" height="1" fill="#cfcfcf"/><rect x="61" y="163" width="1" height="1" fill="#cfcfcf"/><rect x="53" y="171" width="1" height="1" fill="#cfcfcf"/><rect x="61" y="171" width="1" height="1" fill="#cfcfcf"/><rect x="54" y="164" width="7" height="3" fill="#ffffff"/><rect x="54" y="167" width="7" height="2" fill="#f4f4f4"/><rect x="54" y="169" width="7" height="2" fill="#e2e2e2"/><rect x="55" y="167" width="5" height="1" fill="#3c5aa8"/><rect x="57" y="165" width="1" height="5" fill="#3c5aa8"/><rect x="63" y="167" width="1" height="1" fill="#888888"/><rect x="65" y="167" width="1" height="1" fill="#888888"/><rect x="67" y="167" width="1" height="1" fill="#888888"/><rect x="54" y="179" width="7" height="1" fill="#919191"/><rect x="54" y="187" width="7" height="1" fill="#919191"/><rect x="53" y="180" width="1" height="7" fill="#919191"/><rect x="61" y="180" width="1" height="7" fill="#919191"/><rect x="53" y="179" width="1" height="1" fill="#cfcfcf"/><rect x="61" y="179" width="1" height="1" fill="#cfcfcf"/><rect x="53" y="187" width="1" height="1" fill="#cfcfcf"/><rect x="61" y="187" width="1" height="1" fill="#cfcfcf"/><rect x="54" y="180" width="7" height="3" fill="#ffffff"/><rect x="54" y="183" width="7" height="2" fill="#f4f4f4"/><rect x="54" y="185" width="7" height="2" fill="#e2e2e2"/><rect x="55" y="183" width="5" height="1" fill="#3c5aa8"/><rect x="57" y="181" width="1" height="5" fill="#3c5aa8"/><rect x="63" y="183" width="1" height="1" fill="#888888"/><rect x="65" y="183" width="1" height="1" fill="#888888"/><rect x="67" y="183" width="1" height="1" fill="#888888"/><rect x="35" y="195" width="7" height="1" fill="#919191"/><rect x="35" y="203" width="7" height="1" fill="#919191"/><rect x="34" y="196" width="1" height="7" fill="#919191"/><rect x="42" y="196" width="1" height="7" fill="#919191"/><rect x="34" y="195" width="1" height="1" fill="#cfcfcf"/><rect x="42" y="195" width="1" height="1" fill="#cfcfcf"/><rect x="34" y="203" width="1" height="1" fill="#cfcfcf"/><rect x="42" y="203" width="1" height="1" fill="#cfcfcf"/><rect x="35" y="196" width="7" height="3" fill="#ffffff"/><rect x="35" y="199" width="7" height="2" fill="#f4f4f4"/><rect x="35" y="201" width="7" height="2" fill="#e2e2e2"/><rect x="36" y="199" width="5" height="1" fill="#3c5aa8"/><rect x="43" y="199" width="1" height="1" fill="#888888"/><rect x="45" y="199" width="1" height="1" fill="#888888"/><rect x="47" y="199" width="1" height="1" fill="#888888"/><rect x="54" y="192" width="5" height="1" fill="#000"/><rect x="51" y="195" width="11" height="9" fill="#fff"/><rect x="52" y="192" width="1" height="1" fill="#000"/><rect x="51" y="193" width="1" height="1" fill="#000"/><rect x="53" y="193" width="1" height="1" fill="#000"/><rect x="50" y="194" width="1" height="1" fill="#000"/><rect x="52" y="194" width="1" height="1" fill="#000"/><rect x="51" y="195" width="1" height="1" fill="#000"/><rect x="60" y="192" width="1" height="1" fill="#000"/><rect x="59" y="193" width="1" height="1" fill="#000"/><rect x="61" y="193" width="1" height="1" fill="#000"/><rect x="60" y="194" width="1" height="1" fill="#000"/><rect x="62" y="194" width="1" height="1" fill="#000"/><rect x="61" y="195" width="1" height="1" fill="#000"/><rect x="50" y="196" width="1" height="5" fill="#000"/><rect x="62" y="196" width="1" height="5" fill="#000"/><rect x="51" y="201" width="1" height="1" fill="#000"/><rect x="61" y="201" width="1" height="1" fill="#000"/><rect x="52" y="202" width="1" height="3" fill="#000"/><rect x="60" y="202" width="1" height="3" fill="#000"/><rect x="53" y="203" width="1" height="1" fill="#000"/><rect x="59" y="203" width="1" height="1" fill="#000"/><rect x="54" y="204" width="5" height="1" fill="#000"/><rect x="56" y="196" width="1" height="3" fill="#000"/><rect x="57" y="198" width="3" height="1" fill="#000"/><rect x="57" y="207" width="1" height="1" fill="#888888"/><rect x="57" y="209" width="1" height="1" fill="#888888"/><rect x="54" y="211" width="7" height="1" fill="#919191"/><rect x="54" y="219" width="7" height="1" fill="#919191"/><rect x="53" y="212" width="1" height="7" fill="#919191"/><rect x="61" y="212" width="1" height="7" fill="#919191"/><rect x="53" y="211" width="1" height="1" fill="#cfcfcf"/><rect x="61" y="211" width="1" height="1" fill="#cfcfcf"/><rect x="53" y="219" width="1" height="1" fill="#cfcfcf"/><rect x="61" y="219" width="1" height="1" fill="#cfcfcf"/><rect x="54" y="212" width="7" height="3" fill="#ffffff"/><rect x="54" y="215" width="7" height="2" fill="#f4f4f4"/><rect x="54" y="217" width="7" height="2" fill="#e2e2e2"/><rect x="55" y="215" width="5" height="1" fill="#3c5aa8"/><rect x="57" y="213" width="1" height="5" fill="#3c5aa8"/><rect x="63" y="215" width="1" height="1" fill="#888888"/><rect x="65" y="215" width="1" height="1" fill="#888888"/><rect x="67" y="215" width="1" height="1" fill="#888888"/><rect x="54" y="227" width="7" height="1" fill="#919191"/><rect x="54" y="235" width="7" height="1" fill="#919191"/><rect x="53" y="228" width="1" height="7" fill="#919191"/><rect x="61" y="228" width="1" height="7" fill="#919191"/><rect x="53" y="227" width="1" height="1" fill="#cfcfcf"/><rect x="61" y="227" width="1" height="1" fill="#cfcfcf"/><rect x="53" y="235" width="1" height="1" fill="#cfcfcf"/><rect x="61" y="235" width="1" height="1" fill="#cfcfcf"/><rect x="54" y="228" width="7" height="3" fill="#ffffff"/><rect x="54" y="231" width="7" height="2" fill="#f4f4f4"/><rect x="54" y="233" width="7" height="2" fill="#e2e2e2"/><rect x="55" y="231" width="5" height="1" fill="#3c5aa8"/><rect x="57" y="229" width="1" height="5" fill="#3c5aa8"/><rect x="63" y="231" width="1" height="1" fill="#888888"/><rect x="65" y="231" width="1" height="1" fill="#888888"/><rect x="67" y="231" width="1" height="1" fill="#888888"/><rect x="35" y="243" width="7" height="1" fill="#919191"/><rect x="35" y="251" width="7" height="1" fill="#919191"/><rect x="34" y="244" width="1" height="7" fill="#919191"/><rect x="42" y="244" width="1" height="7" fill="#919191"/><rect x="34" y="243" width="1" height="1" fill="#cfcfcf"/><rect x="42" y="243" width="1" height="1" fill="#cfcfcf"/><rect x="34" y="251" width="1" height="1" fill="#cfcfcf"/><rect x="42" y="251" width="1" height="1" fill="#cfcfcf"/><rect x="35" y="244" width="7" height="3" fill="#ffffff"/><rect x="35" y="247" width="7" height="2" fill="#f4f4f4"/><rect x="35" y="249" width="7" height="2" fill="#e2e2e2"/><rect x="36" y="247" width="5" height="1" fill="#3c5aa8"/><rect x="43" y="247" width="1" height="1" fill="#888888"/><rect x="45" y="247" width="1" height="1" fill="#888888"/><rect x="47" y="247" width="1" height="1" fill="#888888"/><rect x="54" y="240" width="5" height="1" fill="#000"/><rect x="51" y="243" width="11" height="9" fill="#fff"/><rect x="52" y="240" width="1" height="1" fill="#000"/><rect x="51" y="241" width="1" height="1" fill="#000"/><rect x="53" y="241" width="1" height="1" fill="#000"/><rect x="50" y="242" width="1" height="1" fill="#000"/><rect x="52" y="242" width="1" height="1" fill="#000"/><rect x="51" y="243" width="1" height="1" fill="#000"/><rect x="60" y="240" width="1" height="1" fill="#000"/><rect x="59" y="241" width="1" height="1" fill="#000"/><rect x="61" y="241" width="1" height="1" fill="#000"/><rect x="60" y="242" width="1" height="1" fill="#000"/><rect x="62" y="242" width="1" height="1" fill="#000"/><rect x="61" y="243" width="1" height="1" fill="#000"/><rect x="50" y="244" width="1" height="5" fill="#000"/><rect x="62" y="244" width="1" height="5" fill="#000"/><rect x="51" y="249" width="1" height="1" fill="#000"/><rect x="61" y="249" width="1" height="1" fill="#000"/><rect x="52" y="250" width="1" height="3" fill="#000"/><rect x="60" y="250" width="1" height="3" fill="#000"/><rect x="53" y="251" width="1" height="1" fill="#000"/><rect x="59" y="251" width="1" height="1" fill="#000"/><rect x="54" y="252" width="5" height="1" fill="#000"/><rect x="56" y="244" width="1" height="3" fill="#000"/><rect x="57" y="246" width="3" height="1" fill="#000"/><rect x="57" y="255" width="1" height="1" fill="#888888"/><rect x="57" y="257" width="1" height="1" fill="#888888"/><rect x="54" y="259" width="7" height="1" fill="#919191"/><rect x="54" y="267" width="7" height="1" fill="#919191"/><rect x="53" y="260" width="1" height="7" fill="#919191"/><rect x="61" y="260" width="1" height="7" fill="#919191"/><rect x="53" y="259" width="1" height="1" fill="#cfcfcf"/><rect x="61" y="259" width="1" height="1" fill="#cfcfcf"/><rect x="53" y="267" width="1" height="1" fill="#cfcfcf"/><rect x="61" y="267" width="1" height="1" fill="#cfcfcf"/><rect x="54" y="260" width="7" height="3" fill="#ffffff"/><rect x="54" y="263" width="7" height="2" fill="#f4f4f4"/><rect x="54" y="265" width="7" height="2" fill="#e2e2e2"/><rect x="55" y="263" width="5" height="1" fill="#3c5aa8"/><rect x="57" y="261" width="1" height="5" fill="#3c5aa8"/><rect x="63" y="263" width="1" height="1" fill="#888888"/><rect x="65" y="263" width="1" height="1" fill="#888888"/><rect x="67" y="263" width="1" height="1" fill="#888888"/><rect x="54" y="275" width="7" height="1" fill="#919191"/><rect x="54" y="283" width="7" height="1" fill="#919191"/><rect x="53" y="276" width="1" height="7" fill="#919191"/><rect x="61" y="276" width="1" height="7" fill="#919191"/><rect x="53" y="275" width="1" height="1" fill="#cfcfcf"/><rect x="61" y="275" width="1" height="1" fill="#cfcfcf"/><rect x="53" y="283" width="1" height="1" fill="#cfcfcf"/><rect x="61" y="283" width="1" height="1" fill="#cfcfcf"/><rect x="54" y="276" width="7" height="3" fill="#ffffff"/><rect x="54" y="279" width="7" height="2" fill="#f4f4f4"/><rect x="54" y="281" width="7" height="2" fill="#e2e2e2"/><rect x="55" y="279" width="5" height="1" fill="#3c5aa8"/><rect x="57" y="277" width="1" height="5" fill="#3c5aa8"/><rect x="63" y="279" width="1" height="1" fill="#888888"/><rect x="65" y="279" width="1" height="1" fill="#888888"/><rect x="67" y="279" width="1" height="1" fill="#888888"/><rect x="57" y="127" width="1" height="1" fill="#888888"/><rect x="57" y="129" width="1" height="1" fill="#888888"/><rect x="57" y="131" width="1" height="1" fill="#888888"/><rect x="57" y="133" width="1" height="1" fill="#888888"/><rect x="57" y="135" width="1" height="1" fill="#888888"/><rect x="57" y="159" width="1" height="1" fill="#888888"/><rect x="57" y="161" width="1" height="1" fill="#888888"/><rect x="57" y="163" width="1" height="1" fill="#888888"/><rect x="57" y="165" width="1" height="1" fill="#888888"/><rect x="57" y="167" width="1" height="1" fill="#888888"/><rect x="57" y="169" width="1" height="1" fill="#888888"/><rect x="57" y="171" width="1" height="1" fill="#888888"/><rect x="57" y="173" width="1" height="1" fill="#888888"/><rect x="57" y="175" width="1" height="1" fill="#888888"/><rect x="57" y="177" width="1" height="1" fill="#888888"/><rect x="57" y="179" width="1" height="1" fill="#888888"/><rect x="57" y="181" width="1" height="1" fill="#888888"/><rect x="57" y="183" width="1" height="1" fill="#888888"/><rect x="57" y="207" width="1" height="1" fill="#888888"/><rect x="57" y="209" width="1" height="1" fill="#888888"/><rect x="57" y="211" width="1" height="1" fill="#888888"/><rect x="57" y="213" width="1" height="1" fill="#888888"/><rect x="57" y="215" width="1" height="1" fill="#888888"/><rect x="57" y="217" width="1" height="1" fill="#888888"/><rect x="57" y="219" width="1" height="1" fill="#888888"/><rect x="57" y="221" width="1" height="1" fill="#888888"/><rect x="57" y="223" width="1" height="1" fill="#888888"/><rect x="57" y="225" width="1" height="1" fill="#888888"/><rect x="57" y="227" width="1" height="1" fill="#888888"/><rect x="57" y="229" width="1" height="1" fill="#888888"/><rect x="57" y="231" width="1" height="1" fill="#888888"/><rect x="57" y="255" width="1" height="1" fill="#888888"/><rect x="57" y="257" width="1" height="1" fill="#888888"/><rect x="57" y="259" width="1" height="1" fill="#888888"/><rect x="57" y="261" width="1" height="1" fill="#888888"/><rect x="57" y="263" width="1" height="1" fill="#888888"/><rect x="57" y="265" width="1" height="1" fill="#888888"/><rect x="57" y="267" width="1" height="1" fill="#888888"/><rect x="57" y="269" width="1" height="1" fill="#888888"/><rect x="57" y="271" width="1" height="1" fill="#888888"/><rect x="57" y="273" width="1" height="1" fill="#888888"/><rect x="57" y="275" width="1" height="1" fill="#888888"/><rect x="57" y="277" width="1" height="1" fill="#888888"/><rect x="57" y="279" width="1" height="1" fill="#888888"/><rect x="35" y="115" width="7" height="1" fill="#919191"/><rect x="35" y="123" width="7" height="1" fill="#919191"/><rect x="34" y="116" width="1" height="7" fill="#919191"/><rect x="42" y="116" width="1" height="7" fill="#919191"/><rect x="34" y="115" width="1" height="1" fill="#cfcfcf"/><rect x="42" y="115" width="1" height="1" fill="#cfcfcf"/><rect x="34" y="123" width="1" height="1" fill="#cfcfcf"/><rect x="42" y="123" width="1" height="1" fill="#cfcfcf"/><rect x="35" y="116" width="7" height="3" fill="#ffffff"/><rect x="35" y="119" width="7" height="2" fill="#f4f4f4"/><rect x="35" y="121" width="7" height="2" fill="#e2e2e2"/><rect x="36" y="119" width="5" height="1" fill="#3c5aa8"/><rect x="54" y="131" width="7" height="1" fill="#919191"/><rect x="54" y="139" width="7" height="1" fill="#919191"/><rect x="53" y="132" width="1" height="7" fill="#919191"/><rect x="61" y="132" width="1" height="7" fill="#919191"/><rect x="53" y="131" width="1" height="1" fill="#cfcfcf"/><rect x="61" y="131" width="1" height="1" fill="#cfcfcf"/><rect x="53" y="139" width="1" height="1" fill="#cfcfcf"/><rect x="61" y="139" width="1" height="1" fill="#cfcfcf"/><rect x="54" y="132" width="7" height="3" fill="#ffffff"/><rect x="54" y="135" width="7" height="2" fill="#f4f4f4"/><rect x="54" y="137" width="7" height="2" fill="#e2e2e2"/><rect x="55" y="135" width="5" height="1" fill="#3c5aa8"/><rect x="57" y="133" width="1" height="5" fill="#3c5aa8"/><rect x="35" y="147" width="7" height="1" fill="#919191"/><rect x="35" y="155" width="7" height="1" fill="#919191"/><rect x="34" y="148" width="1" height="7" fill="#919191"/><rect x="42" y="148" width="1" height="7" fill="#919191"/><rect x="34" y="147" width="1" height="1" fill="#cfcfcf"/><rect x="42" y="147" width="1" height="1" fill="#cfcfcf"/><rect x="34" y="155" width="1" height="1" fill="#cfcfcf"/><rect x="42" y="155" width="1" height="1" fill="#cfcfcf"/><rect x="35" y="148" width="7" height="3" fill="#ffffff"/><rect x="35" y="151" width="7" height="2" fill="#f4f4f4"/><rect x="35" y="153" width="7" height="2" fill="#e2e2e2"/><rect x="36" y="151" width="5" height="1" fill="#3c5aa8"/><rect x="54" y="163" width="7" height="1" fill="#919191"/><rect x="54" y="171" width="7" height="1" fill="#919191"/><rect x="53" y="164" width="1" height="7" fill="#919191"/><rect x="61" y="164" width="1" height="7" fill="#919191"/><rect x="53" y="163" width="1" height="1" fill="#cfcfcf"/><rect x="61" y="163" width="1" height="1" fill="#cfcfcf"/><rect x="53" y="171" width="1" height="1" fill="#cfcfcf"/><rect x="61" y="171" width="1" height="1" fill="#cfcfcf"/><rect x="54" y="164" width="7" height="3" fill="#ffffff"/><rect x="54" y="167" width="7" height="2" fill="#f4f4f4"/><rect x="54" y="169" width="7" height="2" fill="#e2e2e2"/><rect x="55" y="167" width="5" height="1" fill="#3c5aa8"/><rect x="57" y="165" width="1" height="5" fill="#3c5aa8"/><rect x="54" y="179" width="7" height="1" fill="#919191"/><rect x="54" y="187" width="7" height="1" fill="#919191"/><rect x="53" y="180" width="1" height="7" fill="#919191"/><rect x="61" y="180" width="1" height="7" fill="#919191"/><rect x="53" y="179" width="1" height="1" fill="#cfcfcf"/><rect x="61" y="179" width="1" height="1" fill="#cfcfcf"/><rect x="53" y="187" width="1" height="1" fill="#cfcfcf"/><rect x="61" y="187" width="1" height="1" fill="#cfcfcf"/><rect x="54" y="180" width="7" height="3" fill="#ffffff"/><rect x="54" y="183" width="7" height="2" fill="#f4f4f4"/><rect x="54" y="185" width="7" height="2" fill="#e2e2e2"/><rect x="55" y="183" width="5" height="1" fill="#3c5aa8"/><rect x="57" y="181" width="1" height="5" fill="#3c5aa8"/><rect x="35" y="195" width="7" height="1" fill="#919191"/><rect x="35" y="203" width="7" height="1" fill="#919191"/><rect x="34" y="196" width="1" height="7" fill="#919191"/><rect x="42" y="196" width="1" height="7" fill="#919191"/><rect x="34" y="195" width="1" height="1" fill="#cfcfcf"/><rect x="42" y="195" width="1" height="1" fill="#cfcfcf"/><rect x="34" y="203" width="1" height="1" fill="#cfcfcf"/><rect x="42" y="203" width="1" height="1" fill="#cfcfcf"/><rect x="35" y="196" width="7" height="3" fill="#ffffff"/><rect x="35" y="199" width="7" height="2" fill="#f4f4f4"/><rect x="35" y="201" width="7" height="2" fill="#e2e2e2"/><rect x="36" y="199" width="5" height="1" fill="#3c5aa8"/><rect x="54" y="211" width="7" height="1" fill="#919191"/><rect x="54" y="219" width="7" height="1" fill="#919191"/><rect x="53" y="212" width="1" height="7" fill="#919191"/><rect x="61" y="212" width="1" height="7" fill="#919191"/><rect x="53" y="211" width="1" height="1" fill="#cfcfcf"/><rect x="61" y="211" width="1" height="1" fill="#cfcfcf"/><rect x="53" y="219" width="1" height="1" fill="#cfcfcf"/><rect x="61" y="219" width="1" height="1" fill="#cfcfcf"/><rect x="54" y="212" width="7" height="3" fill="#ffffff"/><rect x="54" y="215" width="7" height="2" fill="#f4f4f4"/><rect x="54" y="217" width="7" height="2" fill="#e2e2e2"/><rect x="55" y="215" width="5" height="1" fill="#3c5aa8"/><rect x="57" y="213" width="1" height="5" fill="#3c5aa8"/><rect x="54" y="227" width="7" height="1" fill="#919191"/><rect x="54" y="235" width="7" height="1" fill="#919191"/><rect x="53" y="228" width="1" height="7" fill="#919191"/><rect x="61" y="228" width="1" height="7" fill="#919191"/><rect x="53" y="227" width="1" height="1" fill="#cfcfcf"/><rect x="61" y="227" width="1" height="1" fill="#cfcfcf"/><rect x="53" y="235" width="1" height="1" fill="#cfcfcf"/><rect x="61" y="235" width="1" height="1" fill="#cfcfcf"/><rect x="54" y="228" width="7" height="3" fill="#ffffff"/><rect x="54" y="231" width="7" height="2" fill="#f4f4f4"/><rect x="54" y="233" width="7" height="2" fill="#e2e2e2"/><rect x="55" y="231" width="5" height="1" fill="#3c5aa8"/><rect x="57" y="229" width="1" height="5" fill="#3c5aa8"/><rect x="35" y="243" width="7" height="1" fill="#919191"/><rect x="35" y="251" width="7" height="1" fill="#919191"/><rect x="34" y="244" width="1" height="7" fill="#919191"/><rect x="42" y="244" width="1" height="7" fill="#919191"/><rect x="34" y="243" width="1" height="1" fill="#cfcfcf"/><rect x="42" y="243" width="1" height="1" fill="#cfcfcf"/><rect x="34" y="251" width="1" height="1" fill="#cfcfcf"/><rect x="42" y="251" width="1" height="1" fill="#cfcfcf"/><rect x="35" y="244" width="7" height="3" fill="#ffffff"/><rect x="35" y="247" width="7" height="2" fill="#f4f4f4"/><rect x="35" y="249" width="7" height="2" fill="#e2e2e2"/><rect x="36" y="247" width="5" height="1" fill="#3c5aa8"/><rect x="54" y="259" width="7" height="1" fill="#919191"/><rect x="54" y="267" width="7" height="1" fill="#919191"/><rect x="53" y="260" width="1" height="7" fill="#919191"/><rect x="61" y="260" width="1" height="7" fill="#919191"/><rect x="53" y="259" width="1" height="1" fill="#cfcfcf"/><rect x="61" y="259" width="1" height="1" fill="#cfcfcf"/><rect x="53" y="267" width="1" height="1" fill="#cfcfcf"/><rect x="61" y="267" width="1" height="1" fill="#cfcfcf"/><rect x="54" y="260" width="7" height="3" fill="#ffffff"/><rect x="54" y="263" width="7" height="2" fill="#f4f4f4"/><rect x="54" y="265" width="7" height="2" fill="#e2e2e2"/><rect x="55" y="263" width="5" height="1" fill="#3c5aa8"/><rect x="57" y="261" width="1" height="5" fill="#3c5aa8"/><rect x="54" y="275" width="7" height="1" fill="#919191"/><rect x="54" y="283" width="7" height="1" fill="#919191"/><rect x="53" y="276" width="1" height="7" fill="#919191"/><rect x="61" y="276" width="1" height="7" fill="#919191"/><rect x="53" y="275" width="1" height="1" fill="#cfcfcf"/><rect x="61" y="275" width="1" height="1" fill="#cfcfcf"/><rect x="53" y="283" width="1" height="1" fill="#cfcfcf"/><rect x="61" y="283" width="1" height="1" fill="#cfcfcf"/><rect x="54" y="276" width="7" height="3" fill="#ffffff"/><rect x="54" y="279" width="7" height="2" fill="#f4f4f4"/><rect x="54" y="281" width="7" height="2" fill="#e2e2e2"/><rect x="55" y="279" width="5" height="1" fill="#3c5aa8"/><rect x="57" y="277" width="1" height="5" fill="#3c5aa8"/><rect x="235" y="92" width="3" height="1" fill="#6b6b6b"/><rect x="11" y="556" width="222" height="15" fill="#f0f0f0"/><rect x="28" y="556" width="174" height="15" fill="#cdcdcd"/><rect x="19" y="560" width="3" height="1" fill="#505050"/><rect x="18" y="561" width="3" height="1" fill="#505050"/><rect x="17" y="562" width="3" height="1" fill="#505050"/><rect x="16" y="563" width="3" height="1" fill="#505050"/><rect x="17" y="564" width="3" height="1" fill="#505050"/><rect x="18" y="565" width="3" height="1" fill="#505050"/><rect x="19" y="566" width="3" height="1" fill="#505050"/><rect x="222" y="560" width="3" height="1" fill="#505050"/><rect x="223" y="561" width="3" height="1" fill="#505050"/><rect x="224" y="562" width="3" height="1" fill="#505050"/><rect x="225" y="563" width="3" height="1" fill="#505050"/><rect x="224" y="564" width="3" height="1" fill="#505050"/><rect x="223" y="565" width="3" height="1" fill="#505050"/><rect x="222" y="566" width="3" height="1" fill="#505050"/><rect x="14" y="575" width="1" height="1" fill="#000"/><rect x="13" y="576" width="3" height="1" fill="#000"/><rect x="12" y="577" width="5" height="1" fill="#000"/><rect x="23" y="575" width="6" height="1" fill="#000"/><rect x="24" y="576" width="4" height="1" fill="#000"/><rect x="25" y="577" width="2" height="1" fill="#000"/><rect x="74" y="128" width="5" height="1" fill="#000"/><rect x="72" y="129" width="2" height="1" fill="#000"/><rect x="74" y="129" width="5" height="1" fill="#00ff00"/><rect x="79" y="129" width="2" height="1" fill="#000"/><rect x="70" y="130" width="2" height="1" fill="#000"/><rect x="72" y="130" width="9" height="1" fill="#00ff00"/><rect x="81" y="130" width="2" height="1" fill="#000"/><rect x="69" y="131" width="1" height="1" fill="#000"/><rect x="70" y="131" width="13" height="1" fill="#00ff00"/><rect x="83" y="131" width="1" height="1" fill="#000"/><rect x="69" y="132" width="1" height="1" fill="#000"/><rect x="70" y="132" width="13" height="1" fill="#00ff00"/><rect x="83" y="132" width="1" height="1" fill="#000"/><rect x="68" y="133" width="1" height="1" fill="#000"/><rect x="69" y="133" width="15" height="1" fill="#00ff00"/><rect x="84" y="133" width="1" height="1" fill="#000"/><rect x="68" y="134" width="1" height="1" fill="#000"/><rect x="69" y="134" width="15" height="1" fill="#00ff00"/><rect x="84" y="134" width="1" height="1" fill="#000"/><rect x="68" y="135" width="1" height="1" fill="#000"/><rect x="69" y="135" width="15" height="1" fill="#00ff00"/><rect x="84" y="135" width="1" height="1" fill="#000"/><rect x="68" y="136" width="1" height="1" fill="#000"/><rect x="69" y="136" width="15" height="1" fill="#00ff00"/><rect x="84" y="136" width="1" height="1" fill="#000"/><rect x="68" y="137" width="1" height="1" fill="#000"/><rect x="69" y="137" width="15" height="1" fill="#00ff00"/><rect x="84" y="137" width="1" height="1" fill="#000"/><rect x="69" y="138" width="1" height="1" fill="#000"/><rect x="70" y="138" width="13" height="1" fill="#00ff00"/><rect x="83" y="138" width="1" height="1" fill="#000"/><rect x="69" y="139" width="1" height="1" fill="#000"/><rect x="70" y="139" width="13" height="1" fill="#00ff00"/><rect x="83" y="139" width="1" height="1" fill="#000"/><rect x="70" y="140" width="2" height="1" fill="#000"/><rect x="72" y="140" width="9" height="1" fill="#00ff00"/><rect x="81" y="140" width="2" height="1" fill="#000"/><rect x="72" y="141" width="2" height="1" fill="#000"/><rect x="74" y="141" width="5" height="1" fill="#00ff00"/><rect x="79" y="141" width="2" height="1" fill="#000"/><rect x="74" y="142" width="5" height="1" fill="#000"/><rect x="86" y="129" width="11" height="11" fill="#000"/><rect x="87" y="130" width="9" height="9" fill="#ffffc0"/><rect x="74" y="160" width="5" height="1" fill="#000"/><rect x="72" y="161" width="2" height="1" fill="#000"/><rect x="74" y="161" width="5" height="1" fill="#00ff00"/><rect x="79" y="161" width="2" height="1" fill="#000"/><rect x="70" y="162" width="2" height="1" fill="#000"/><rect x="72" y="162" width="9" height="1" fill="#00ff00"/><rect x="81" y="162" width="2" height="1" fill="#000"/><rect x="69" y="163" width="1" height="1" fill="#000"/><rect x="70" y="163" width="13" height="1" fill="#00ff00"/><rect x="83" y="163" width="1" height="1" fill="#000"/><rect x="69" y="164" width="1" height="1" fill="#000"/><rect x="70" y="164" width="13" height="1" fill="#00ff00"/><rect x="83" y="164" width="1" height="1" fill="#000"/><rect x="68" y="165" width="1" height="1" fill="#000"/><rect x="69" y="165" width="15" height="1" fill="#00ff00"/><rect x="84" y="165" width="1" height="1" fill="#000"/><rect x="68" y="166" width="1" height="1" fill="#000"/><rect x="69" y="166" width="15" height="1" fill="#00ff00"/><rect x="84" y="166" width="1" height="1" fill="#000"/><rect x="68" y="167" width="1" height="1" fill="#000"/><rect x="69" y="167" width="15" height="1" fill="#00ff00"/><rect x="84" y="167" width="1" height="1" fill="#000"/><rect x="68" y="168" width="1" height="1" fill="#000"/><rect x="69" y="168" width="15" height="1" fill="#00ff00"/><rect x="84" y="168" width="1" height="1" fill="#000"/><rect x="68" y="169" width="1" height="1" fill="#000"/><rect x="69" y="169" width="15" height="1" fill="#00ff00"/><rect x="84" y="169" width="1" height="1" fill="#000"/><rect x="69" y="170" width="1" height="1" fill="#000"/><rect x="70" y="170" width="13" height="1" fill="#00ff00"/><rect x="83" y="170" width="1" height="1" fill="#000"/><rect x="69" y="171" width="1" height="1" fill="#000"/><rect x="70" y="171" width="13" height="1" fill="#00ff00"/><rect x="83" y="171" width="1" height="1" fill="#000"/><rect x="70" y="172" width="2" height="1" fill="#000"/><rect x="72" y="172" width="9" height="1" fill="#00ff00"/><rect x="81" y="172" width="2" height="1" fill="#000"/><rect x="72" y="173" width="2" height="1" fill="#000"/><rect x="74" y="173" width="5" height="1" fill="#00ff00"/><rect x="79" y="173" width="2" height="1" fill="#000"/><rect x="74" y="174" width="5" height="1" fill="#000"/><rect x="86" y="161" width="11" height="11" fill="#000"/><rect x="87" y="162" width="9" height="9" fill="#ffffc0"/><rect x="74" y="176" width="5" height="1" fill="#000"/><rect x="72" y="177" width="2" height="1" fill="#000"/><rect x="74" y="177" width="5" height="1" fill="#00ff00"/><rect x="79" y="177" width="2" height="1" fill="#000"/><rect x="70" y="178" width="2" height="1" fill="#000"/><rect x="72" y="178" width="9" height="1" fill="#00ff00"/><rect x="81" y="178" width="2" height="1" fill="#000"/><rect x="69" y="179" width="1" height="1" fill="#000"/><rect x="70" y="179" width="13" height="1" fill="#00ff00"/><rect x="83" y="179" width="1" height="1" fill="#000"/><rect x="69" y="180" width="1" height="1" fill="#000"/><rect x="70" y="180" width="13" height="1" fill="#00ff00"/><rect x="83" y="180" width="1" height="1" fill="#000"/><rect x="68" y="181" width="1" height="1" fill="#000"/><rect x="69" y="181" width="15" height="1" fill="#00ff00"/><rect x="84" y="181" width="1" height="1" fill="#000"/><rect x="68" y="182" width="1" height="1" fill="#000"/><rect x="69" y="182" width="15" height="1" fill="#00ff00"/><rect x="84" y="182" width="1" height="1" fill="#000"/><rect x="68" y="183" width="1" height="1" fill="#000"/><rect x="69" y="183" width="15" height="1" fill="#00ff00"/><rect x="84" y="183" width="1" height="1" fill="#000"/><rect x="68" y="184" width="1" height="1" fill="#000"/><rect x="69" y="184" width="15" height="1" fill="#00ff00"/><rect x="84" y="184" width="1" height="1" fill="#000"/><rect x="68" y="185" width="1" height="1" fill="#000"/><rect x="69" y="185" width="15" height="1" fill="#00ff00"/><rect x="84" y="185" width="1" height="1" fill="#000"/><rect x="69" y="186" width="1" height="1" fill="#000"/><rect x="70" y="186" width="13" height="1" fill="#00ff00"/><rect x="83" y="186" width="1" height="1" fill="#000"/><rect x="69" y="187" width="1" height="1" fill="#000"/><rect x="70" y="187" width="13" height="1" fill="#00ff00"/><rect x="83" y="187" width="1" height="1" fill="#000"/><rect x="70" y="188" width="2" height="1" fill="#000"/><rect x="72" y="188" width="9" height="1" fill="#00ff00"/><rect x="81" y="188" width="2" height="1" fill="#000"/><rect x="72" y="189" width="2" height="1" fill="#000"/><rect x="74" y="189" width="5" height="1" fill="#00ff00"/><rect x="79" y="189" width="2" height="1" fill="#000"/><rect x="74" y="190" width="5" height="1" fill="#000"/><rect x="86" y="177" width="11" height="11" fill="#000"/><rect x="87" y="178" width="9" height="9" fill="#ffffc0"/><rect x="74" y="208" width="5" height="1" fill="#000"/><rect x="72" y="209" width="2" height="1" fill="#000"/><rect x="74" y="209" width="5" height="1" fill="#00ff00"/><rect x="79" y="209" width="2" height="1" fill="#000"/><rect x="70" y="210" width="2" height="1" fill="#000"/><rect x="72" y="210" width="9" height="1" fill="#00ff00"/><rect x="81" y="210" width="2" height="1" fill="#000"/><rect x="69" y="211" width="1" height="1" fill="#000"/><rect x="70" y="211" width="13" height="1" fill="#00ff00"/><rect x="83" y="211" width="1" height="1" fill="#000"/><rect x="69" y="212" width="1" height="1" fill="#000"/><rect x="70" y="212" width="13" height="1" fill="#00ff00"/><rect x="83" y="212" width="1" height="1" fill="#000"/><rect x="68" y="213" width="1" height="1" fill="#000"/><rect x="69" y="213" width="15" height="1" fill="#00ff00"/><rect x="84" y="213" width="1" height="1" fill="#000"/><rect x="68" y="214" width="1" height="1" fill="#000"/><rect x="69" y="214" width="15" height="1" fill="#00ff00"/><rect x="84" y="214" width="1" height="1" fill="#000"/><rect x="68" y="215" width="1" height="1" fill="#000"/><rect x="69" y="215" width="15" height="1" fill="#00ff00"/><rect x="84" y="215" width="1" height="1" fill="#000"/><rect x="68" y="216" width="1" height="1" fill="#000"/><rect x="69" y="216" width="15" height="1" fill="#00ff00"/><rect x="84" y="216" width="1" height="1" fill="#000"/><rect x="68" y="217" width="1" height="1" fill="#000"/><rect x="69" y="217" width="15" height="1" fill="#00ff00"/><rect x="84" y="217" width="1" height="1" fill="#000"/><rect x="69" y="218" width="1" height="1" fill="#000"/><rect x="70" y="218" width="13" height="1" fill="#00ff00"/><rect x="83" y="218" width="1" height="1" fill="#000"/><rect x="69" y="219" width="1" height="1" fill="#000"/><rect x="70" y="219" width="13" height="1" fill="#00ff00"/><rect x="83" y="219" width="1" height="1" fill="#000"/><rect x="70" y="220" width="2" height="1" fill="#000"/><rect x="72" y="220" width="9" height="1" fill="#00ff00"/><rect x="81" y="220" width="2" height="1" fill="#000"/><rect x="72" y="221" width="2" height="1" fill="#000"/><rect x="74" y="221" width="5" height="1" fill="#00ff00"/><rect x="79" y="221" width="2" height="1" fill="#000"/><rect x="74" y="222" width="5" height="1" fill="#000"/><rect x="86" y="209" width="11" height="11" fill="#000"/><rect x="87" y="210" width="9" height="9" fill="#ffffc0"/><rect x="74" y="224" width="5" height="1" fill="#000"/><rect x="72" y="225" width="2" height="1" fill="#000"/><rect x="74" y="225" width="5" height="1" fill="#00ff00"/><rect x="79" y="225" width="2" height="1" fill="#000"/><rect x="70" y="226" width="2" height="1" fill="#000"/><rect x="72" y="226" width="9" height="1" fill="#00ff00"/><rect x="81" y="226" width="2" height="1" fill="#000"/><rect x="69" y="227" width="1" height="1" fill="#000"/><rect x="70" y="227" width="13" height="1" fill="#00ff00"/><rect x="83" y="227" width="1" height="1" fill="#000"/><rect x="69" y="228" width="1" height="1" fill="#000"/><rect x="70" y="228" width="13" height="1" fill="#00ff00"/><rect x="83" y="228" width="1" height="1" fill="#000"/><rect x="68" y="229" width="1" height="1" fill="#000"/><rect x="69" y="229" width="15" height="1" fill="#00ff00"/><rect x="84" y="229" width="1" height="1" fill="#000"/><rect x="68" y="230" width="1" height="1" fill="#000"/><rect x="69" y="230" width="15" height="1" fill="#00ff00"/><rect x="84" y="230" width="1" height="1" fill="#000"/><rect x="68" y="231" width="1" height="1" fill="#000"/><rect x="69" y="231" width="15" height="1" fill="#00ff00"/><rect x="84" y="231" width="1" height="1" fill="#000"/><rect x="68" y="232" width="1" height="1" fill="#000"/><rect x="69" y="232" width="15" height="1" fill="#00ff00"/><rect x="84" y="232" width="1" height="1" fill="#000"/><rect x="68" y="233" width="1" height="1" fill="#000"/><rect x="69" y="233" width="15" height="1" fill="#00ff00"/><rect x="84" y="233" width="1" height="1" fill="#000"/><rect x="69" y="234" width="1" height="1" fill="#000"/><rect x="70" y="234" width="13" height="1" fill="#00ff00"/><rect x="83" y="234" width="1" height="1" fill="#000"/><rect x="69" y="235" width="1" height="1" fill="#000"/><rect x="70" y="235" width="13" height="1" fill="#00ff00"/><rect x="83" y="235" width="1" height="1" fill="#000"/><rect x="70" y="236" width="2" height="1" fill="#000"/><rect x="72" y="236" width="9" height="1" fill="#00ff00"/><rect x="81" y="236" width="2" height="1" fill="#000"/><rect x="72" y="237" width="2" height="1" fill="#000"/><rect x="74" y="237" width="5" height="1" fill="#00ff00"/><rect x="79" y="237" width="2" height="1" fill="#000"/><rect x="74" y="238" width="5" height="1" fill="#000"/><rect x="86" y="225" width="11" height="11" fill="#000"/><rect x="87" y="226" width="9" height="9" fill="#ffffc0"/><rect x="74" y="256" width="5" height="1" fill="#000"/><rect x="72" y="257" width="2" height="1" fill="#000"/><rect x="74" y="257" width="5" height="1" fill="#00ff00"/><rect x="79" y="257" width="2" height="1" fill="#000"/><rect x="70" y="258" width="2" height="1" fill="#000"/><rect x="72" y="258" width="9" height="1" fill="#00ff00"/><rect x="81" y="258" width="2" height="1" fill="#000"/><rect x="69" y="259" width="1" height="1" fill="#000"/><rect x="70" y="259" width="13" height="1" fill="#00ff00"/><rect x="83" y="259" width="1" height="1" fill="#000"/><rect x="69" y="260" width="1" height="1" fill="#000"/><rect x="70" y="260" width="13" height="1" fill="#00ff00"/><rect x="83" y="260" width="1" height="1" fill="#000"/><rect x="68" y="261" width="1" height="1" fill="#000"/><rect x="69" y="261" width="15" height="1" fill="#00ff00"/><rect x="84" y="261" width="1" height="1" fill="#000"/><rect x="68" y="262" width="1" height="1" fill="#000"/><rect x="69" y="262" width="15" height="1" fill="#00ff00"/><rect x="84" y="262" width="1" height="1" fill="#000"/><rect x="68" y="263" width="1" height="1" fill="#000"/><rect x="69" y="263" width="15" height="1" fill="#00ff00"/><rect x="84" y="263" width="1" height="1" fill="#000"/><rect x="68" y="264" width="1" height="1" fill="#000"/><rect x="69" y="264" width="15" height="1" fill="#00ff00"/><rect x="84" y="264" width="1" height="1" fill="#000"/><rect x="68" y="265" width="1" height="1" fill="#000"/><rect x="69" y="265" width="15" height="1" fill="#00ff00"/><rect x="84" y="265" width="1" height="1" fill="#000"/><rect x="69" y="266" width="1" height="1" fill="#000"/><rect x="70" y="266" width="13" height="1" fill="#00ff00"/><rect x="83" y="266" width="1" height="1" fill="#000"/><rect x="69" y="267" width="1" height="1" fill="#000"/><rect x="70" y="267" width="13" height="1" fill="#00ff00"/><rect x="83" y="267" width="1" height="1" fill="#000"/><rect x="70" y="268" width="2" height="1" fill="#000"/><rect x="72" y="268" width="9" height="1" fill="#00ff00"/><rect x="81" y="268" width="2" height="1" fill="#000"/><rect x="72" y="269" width="2" height="1" fill="#000"/><rect x="74" y="269" width="5" height="1" fill="#00ff00"/><rect x="79" y="269" width="2" height="1" fill="#000"/><rect x="74" y="270" width="5" height="1" fill="#000"/><rect x="86" y="257" width="11" height="11" fill="#000"/><rect x="87" y="258" width="9" height="9" fill="#ffffc0"/><rect x="74" y="272" width="5" height="1" fill="#000"/><rect x="72" y="273" width="2" height="1" fill="#000"/><rect x="74" y="273" width="5" height="1" fill="#00ff00"/><rect x="79" y="273" width="2" height="1" fill="#000"/><rect x="70" y="274" width="2" height="1" fill="#000"/><rect x="72" y="274" width="9" height="1" fill="#00ff00"/><rect x="81" y="274" width="2" height="1" fill="#000"/><rect x="69" y="275" width="1" height="1" fill="#000"/><rect x="70" y="275" width="13" height="1" fill="#00ff00"/><rect x="83" y="275" width="1" height="1" fill="#000"/><rect x="69" y="276" width="1" height="1" fill="#000"/><rect x="70" y="276" width="13" height="1" fill="#00ff00"/><rect x="83" y="276" width="1" height="1" fill="#000"/><rect x="68" y="277" width="1" height="1" fill="#000"/><rect x="69" y="277" width="15" height="1" fill="#00ff00"/><rect x="84" y="277" width="1" height="1" fill="#000"/><rect x="68" y="278" width="1" height="1" fill="#000"/><rect x="69" y="278" width="15" height="1" fill="#00ff00"/><rect x="84" y="278" width="1" height="1" fill="#000"/><rect x="68" y="279" width="1" height="1" fill="#000"/><rect x="69" y="279" width="15" height="1" fill="#00ff00"/><rect x="84" y="279" width="1" height="1" fill="#000"/><rect x="68" y="280" width="1" height="1" fill="#000"/><rect x="69" y="280" width="15" height="1" fill="#00ff00"/><rect x="84" y="280" width="1" height="1" fill="#000"/><rect x="68" y="281" width="1" height="1" fill="#000"/><rect x="69" y="281" width="15" height="1" fill="#00ff00"/><rect x="84" y="281" width="1" height="1" fill="#000"/><rect x="69" y="282" width="1" height="1" fill="#000"/><rect x="70" y="282" width="13" height="1" fill="#00ff00"/><rect x="83" y="282" width="1" height="1" fill="#000"/><rect x="69" y="283" width="1" height="1" fill="#000"/><rect x="70" y="283" width="13" height="1" fill="#00ff00"/><rect x="83" y="283" width="1" height="1" fill="#000"/><rect x="70" y="284" width="2" height="1" fill="#000"/><rect x="72" y="284" width="9" height="1" fill="#00ff00"/><rect x="81" y="284" width="2" height="1" fill="#000"/><rect x="72" y="285" width="2" height="1" fill="#000"/><rect x="74" y="285" width="5" height="1" fill="#00ff00"/><rect x="79" y="285" width="2" height="1" fill="#000"/><rect x="74" y="286" width="5" height="1" fill="#000"/><rect x="86" y="273" width="11" height="11" fill="#000"/><rect x="87" y="274" width="9" height="9" fill="#ffffc0"/></svg>
<svg width="0" height="0" style="position:absolute"><filter id="thr" x="0" y="0" width="100%" height="100%"><feComponentTransfer><feFuncA type="discrete" tableValues="0 0 1 1 1"/></feComponentTransfer></filter><filter id="thr2" x="0" y="0" width="100%" height="100%"><feComponentTransfer><feFuncA type="discrete" tableValues="0 0 0 0 0 1 1 1 1 1"/></feComponentTransfer></filter></svg>
<div class="a" style="left:0;top:0;width:825px;height:585px;filter:url(#thr)"><div class="tr" style="left:80.5px;top:111px">T0</div><div class="tr" style="left:99.5px;top:127px">Condition</div><div class="tr" style="left:80.5px;top:143px">T1</div><div class="tr" style="left:99.5px;top:159px">Condition</div><div class="tr" style="left:99.5px;top:175px">Indicator1</div><div class="tr" style="left:80.5px;top:191px">T2</div><div class="tr" style="left:99.5px;top:207px">Condition</div><div class="tr" style="left:99.5px;top:223px">Indicator1</div><div class="tr" style="left:80.5px;top:239px">T3</div><div class="tr" style="left:99.5px;top:255px">Condition</div><div class="tr" style="left:99.5px;top:271px">Indicator1</div></div>
<div class="a" style="left:0;top:0;width:825px;height:585px;filter:url(#thr2)"><div class="tr" style="left:61px;top:95px;color:#fff;letter-spacing:-0.25px">machine_monitoring_simple</div></div>

<svg class="a" style="left:0;top:0" width="825" height="585" shape-rendering="crispEdges">
<defs><pattern id="h" x="6" y="0" width="9" height="9" patternUnits="userSpaceOnUse"><rect x="0" y="0" width="1" height="1" fill="#6e6e80"/><rect x="1" y="1" width="1" height="1" fill="#6e6e80"/><rect x="2" y="2" width="1" height="1" fill="#6e6e80"/><rect x="3" y="3" width="1" height="1" fill="#6e6e80"/><rect x="4" y="4" width="1" height="1" fill="#6e6e80"/><rect x="5" y="5" width="1" height="1" fill="#6e6e80"/><rect x="6" y="6" width="1" height="1" fill="#6e6e80"/><rect x="7" y="7" width="1" height="1" fill="#6e6e80"/><rect x="8" y="8" width="1" height="1" fill="#6e6e80"/></pattern></defs>
<line x1="521" y1="295.5" x2="581" y2="295.5" stroke="#000" stroke-width="1"/>
<polygon points="569,290.5 579.5,295.5 569,300.5" fill="#000"/>
<line x1="680.5" y1="315" x2="680.5" y2="395" stroke="#000" stroke-width="1"/>
<polygon points="675.5,384 680.5,394.5 685.5,384" fill="#000"/>
<ellipse cx="440.5" cy="295.5" rx="79.9" ry="19.9" fill="#ffffc8" stroke="#000" stroke-width="1.2"/>
<ellipse cx="440.5" cy="295.5" rx="79" ry="19" fill="url(#h)"/>
<ellipse cx="681" cy="295" rx="99.4" ry="19.4" fill="#ffffc8" stroke="#000" stroke-width="1.2"/>
<ellipse cx="680.5" cy="415.5" rx="40" ry="20" fill="#ffffc8" stroke="#000" stroke-width="1.2"/>
</svg>
<div class="a" style="left:0;top:0;width:825px;height:585px;filter:url(#thr2)">
<div class="ct" style="left:398.5px;top:287px;letter-spacing:0.15px">Condition_prev</div>
<div class="ct" style="left:653px;top:287px;letter-spacing:0.4px">Condition</div>
<div class="ct" style="left:653px;top:407px;letter-spacing:0.1px">Indicator1</div>
</div>

</body></html>
